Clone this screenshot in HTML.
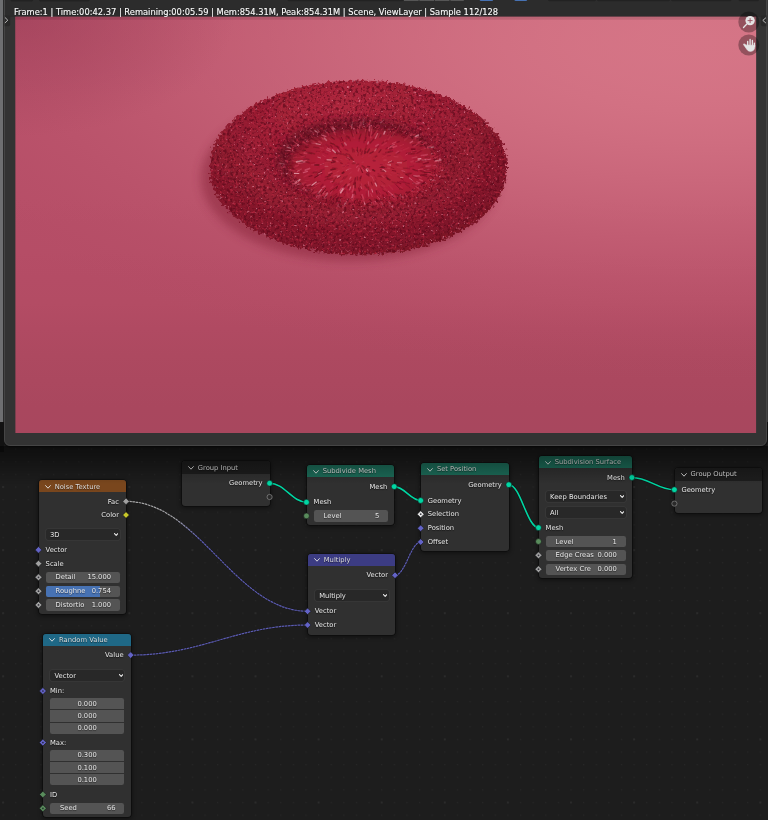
<!DOCTYPE html><html><head><meta charset="utf-8"><title>Blender</title><style>
*{box-sizing:border-box;margin:0;padding:0}
html,body{width:768px;height:820px;overflow:hidden;background:#1d1d1d}
body{position:relative;font-family:"DejaVu Sans","Liberation Sans",sans-serif;font-size:6.76px;color:#e6e6e6;line-height:1}
.abs{position:absolute}
#root{position:absolute;left:0;top:0;width:768px;height:820px;will-change:transform}
#grid{position:absolute;left:0;top:0;width:768px;height:820px}
#vp{position:absolute;left:4px;top:-8px;width:763px;height:454px;background:linear-gradient(#2c2c2c 0,#2c2c2c 24.5px,#333333 24.5px);border:1px solid #454545;border-radius:6px;box-shadow:0 0 2px 1px rgba(0,0,0,.6)}
#lstrip{position:absolute;left:0;top:0;width:4px;height:421.7px;background:#6e6f71;border-right:1px solid #2b2b2b}
#rstrip{position:absolute;left:767px;top:0;width:1px;height:421.7px;background:#3a3a3a}
#vshadow{position:absolute;left:0;top:446px;width:768px;height:38px;background:linear-gradient(rgba(0,0,0,.5),rgba(0,0,0,.36) 30%,rgba(0,0,0,.2) 60%,rgba(0,0,0,0));pointer-events:none}
#lgap{position:absolute;left:0;top:421.7px;width:4px;height:30px;background:#121212}
#status{position:absolute;left:13.9px;top:7.9px;font-size:8.32px;color:#ffffff;white-space:nowrap;-webkit-text-stroke:0.12px #fff;text-shadow:0 0 1px rgba(0,0,0,.6)}
.node{position:absolute;background:#303030;border-radius:3px;box-shadow:0 0 0 .6px rgba(10,10,10,.9),0 1px 4px 1px rgba(0,0,0,.45)}
.hd{position:absolute;left:0;top:0;right:0;border-radius:3px 3px 0 0;white-space:nowrap}
.hd span{position:absolute;left:15.9px;top:0;color:#dadada;text-shadow:0 .5px 1px rgba(0,0,0,.5)}
.hd svg{position:absolute;left:5.9px}
.lab{position:absolute;white-space:nowrap;color:#e6e6e6;text-shadow:0 .5px 1px rgba(0,0,0,.6)}
.fld{position:absolute;background:#545454;border-radius:2.2px;height:11.2px;overflow:hidden}
.fld i{position:absolute;left:0;top:0;bottom:0;background:#4772b3}
.dd span{top:3px !important}
.fld span,.dd span{position:absolute;top:2.7px;font-style:normal;white-space:nowrap;text-shadow:0 .5px 1px rgba(0,0,0,.5)}
.dd{position:absolute;background:#282828;border-radius:2.2px;height:11px;box-shadow:0 0 0 .6px #3d3d3d}
.dd svg{position:absolute;right:1.3px;top:4.6px}
</style></head><body>
<svg id="grid" width="768" height="820"><defs><pattern id="pmin" x="3.1" y="487" width="12.62" height="12.62" patternUnits="userSpaceOnUse" patternTransform="translate(-0.6 -0.6)"><rect x="0" y="0" width="1.15" height="1.15" fill="#272727"/></pattern><pattern id="pmaj" x="3.1" y="487" width="63.1" height="63.1" patternUnits="userSpaceOnUse" patternTransform="translate(-1 -1)"><circle cx="1" cy="1" r="0.95" fill="#2d2d2d"/></pattern></defs><rect width="768" height="820" fill="url(#pmin)"/><rect width="768" height="820" fill="url(#pmaj)"/><defs><linearGradient id="lg1" gradientUnits="userSpaceOnUse" x1="126" y1="0" x2="308" y2="0"><stop offset="0" stop-color="#a8a8a8"/><stop offset="0.27" stop-color="#a0a0a4"/><stop offset="0.41" stop-color="#5c5cb4"/><stop offset="1" stop-color="#5c5cb4"/></linearGradient></defs><path d="M269.6 483.2 C284.5 483.2 291.9 502.2 306.8 502.2" fill="none" stroke="#111" stroke-width="2.8" opacity=".7"/><path d="M269.6 483.2 C284.5 483.2 291.9 502.2 306.8 502.2" fill="none" stroke="#00d6a3" stroke-width="1.6"/><path d="M394.2 486.6 C404.9 486.6 410.3 500.5 421.0 500.5" fill="none" stroke="#111" stroke-width="2.8" opacity=".7"/><path d="M394.2 486.6 C404.9 486.6 410.3 500.5 421.0 500.5" fill="none" stroke="#00d6a3" stroke-width="1.6"/><path d="M508.8 484.7 C520.8 484.7 526.8 527.7 538.8 527.7" fill="none" stroke="#111" stroke-width="2.8" opacity=".7"/><path d="M508.8 484.7 C520.8 484.7 526.8 527.7 538.8 527.7" fill="none" stroke="#00d6a3" stroke-width="1.6"/><path d="M631.9 477.5 C649.0 477.5 657.6 489.7 674.7 489.7" fill="none" stroke="#111" stroke-width="2.8" opacity=".7"/><path d="M631.9 477.5 C649.0 477.5 657.6 489.7 674.7 489.7" fill="none" stroke="#00d6a3" stroke-width="1.6"/><path d="M126.0 501.4 C198.8 501.4 235.1 611.3 307.9 611.3" fill="none" stroke="#111" stroke-width="2.1" opacity=".45"/><path d="M126.0 501.4 C198.8 501.4 235.1 611.3 307.9 611.3" fill="none" stroke="url(#lg1)" stroke-width="1.2" stroke-dasharray="2.6 0.55"/><path d="M130.6 655.1 C201.5 655.1 237.0 625.0 307.9 625.0" fill="none" stroke="#111" stroke-width="2.1" opacity=".45"/><path d="M130.6 655.1 C201.5 655.1 237.0 625.0 307.9 625.0" fill="none" stroke="#5c5cb4" stroke-width="1.2" stroke-dasharray="2.6 0.55"/><path d="M395.0 575.3 C405.4 575.3 410.6 542.0 421.0 542.0" fill="none" stroke="#111" stroke-width="2.1" opacity=".45"/><path d="M395.0 575.3 C405.4 575.3 410.6 542.0 421.0 542.0" fill="none" stroke="#5c5cb4" stroke-width="1.2" stroke-dasharray="2.6 0.55"/></svg>
<div id="root">
<div id="vp"></div>
<div id="lgap"></div><div id="lstrip"></div><div id="rstrip"></div>
<svg class="abs" style="left:15px;top:16px" width="742" height="418" viewBox="15 16 742 418">
<defs>
<linearGradient id="bgv" gradientUnits="userSpaceOnUse" x1="0" y1="17" x2="0" y2="433">
<stop offset="0.000" stop-color="#b44c66"/><stop offset="0.062" stop-color="#b54d66"/><stop offset="0.125" stop-color="#b54d67"/><stop offset="0.188" stop-color="#b64e67"/><stop offset="0.250" stop-color="#b64e67"/><stop offset="0.312" stop-color="#b64e67"/><stop offset="0.375" stop-color="#b64e67"/><stop offset="0.438" stop-color="#b64e67"/><stop offset="0.500" stop-color="#b54d66"/><stop offset="0.562" stop-color="#b54d66"/><stop offset="0.625" stop-color="#b44c65"/><stop offset="0.688" stop-color="#b34c64"/><stop offset="0.750" stop-color="#b04a62"/><stop offset="0.812" stop-color="#ad4960"/><stop offset="0.875" stop-color="#ab485f"/><stop offset="0.938" stop-color="#a9475e"/><stop offset="1.000" stop-color="#a8475e"/>
</linearGradient>
<radialGradient id="bgl" gradientUnits="userSpaceOnUse" cx="0" cy="0" r="1" gradientTransform="translate(705 40) scale(880 345)">
<stop offset="0.000" stop-color="#de808f" stop-opacity="0.780"/><stop offset="0.071" stop-color="#de808f" stop-opacity="0.770"/><stop offset="0.143" stop-color="#de808f" stop-opacity="0.741"/><stop offset="0.214" stop-color="#de808f" stop-opacity="0.695"/><stop offset="0.286" stop-color="#de808f" stop-opacity="0.633"/><stop offset="0.357" stop-color="#de808f" stop-opacity="0.559"/><stop offset="0.429" stop-color="#de808f" stop-opacity="0.477"/><stop offset="0.500" stop-color="#de808f" stop-opacity="0.390"/><stop offset="0.571" stop-color="#de808f" stop-opacity="0.303"/><stop offset="0.643" stop-color="#de808f" stop-opacity="0.221"/><stop offset="0.714" stop-color="#de808f" stop-opacity="0.147"/><stop offset="0.786" stop-color="#de808f" stop-opacity="0.085"/><stop offset="0.857" stop-color="#de808f" stop-opacity="0.039"/><stop offset="0.929" stop-color="#de808f" stop-opacity="0.010"/><stop offset="1.000" stop-color="#de808f" stop-opacity="0.000"/>
</radialGradient>
<radialGradient id="tl" gradientUnits="userSpaceOnUse" cx="0" cy="0" r="1" gradientTransform="translate(15 17) scale(220 120)">
<stop offset="0" stop-color="#9c3f58" stop-opacity=".62"/><stop offset="1" stop-color="#9c3f58" stop-opacity="0"/>
</radialGradient>
<radialGradient id="rim" gradientUnits="userSpaceOnUse" cx="0" cy="0" r="1" gradientTransform="translate(345 105) scale(215 165)">
<stop offset="0" stop-color="#ab263c"/><stop offset="0.4" stop-color="#991e33"/><stop offset="0.75" stop-color="#86192c"/><stop offset="1" stop-color="#781426"/>
</radialGradient>
<radialGradient id="inner" gradientUnits="userSpaceOnUse" cx="0" cy="0" r="1" gradientTransform="translate(366 168) scale(84 44)">
<stop offset="0" stop-color="#b8223b"/><stop offset="0.6" stop-color="#b01f37"/><stop offset="0.9" stop-color="#9c1b31"/><stop offset="1" stop-color="#8e192d"/>
</radialGradient>
<filter id="blur8" x="-20%" y="-20%" width="140%" height="140%"><feGaussianBlur stdDeviation="5"/></filter>
<filter id="blur3" x="-20%" y="-20%" width="140%" height="140%"><feGaussianBlur stdDeviation="3"/></filter>
<filter id="blur6" x="-20%" y="-20%" width="140%" height="140%"><feGaussianBlur stdDeviation="6"/></filter>
<filter id="soft" x="-5%" y="-5%" width="110%" height="110%"><feGaussianBlur stdDeviation="0.45"/></filter>
<filter id="fuzz" x="-5%" y="-5%" width="110%" height="110%">
<feTurbulence type="fractalNoise" baseFrequency="0.33" numOctaves="2" seed="4" result="n"/>
<feDisplacementMap in="SourceGraphic" in2="n" scale="8" xChannelSelector="R" yChannelSelector="G"/>
</filter>
<filter id="tex" x="0" y="0" width="100%" height="100%" color-interpolation-filters="sRGB">
<feTurbulence type="fractalNoise" baseFrequency="0.36" numOctaves="2" seed="7" result="n"/>
<feColorMatrix in="n" type="matrix" values="0 0 0 0 0.93  0 0 0 0 0.60  0 0 0 0 0.68  6 0 0 0 -4.05" result="hi"/>
<feColorMatrix in="n" type="matrix" values="0 0 0 0 0.34  0 0 0 0 0.03  0 0 0 0 0.10  0 -5 0 0 2.6" result="lo"/>
<feColorMatrix in="n" type="matrix" values="0 0 0 0 0.74  0 0 0 0 0.16  0 0 0 0 0.26  0 0 5 0 -2.8" result="mid"/>
<feMerge result="m"><feMergeNode in="lo"/><feMergeNode in="mid"/><feMergeNode in="hi"/></feMerge>
<feGaussianBlur in="m" stdDeviation="0.4" result="mb"/>
<feComposite in="mb" in2="SourceGraphic" operator="in"/>
</filter>
<mask id="basinm" maskUnits="userSpaceOnUse" x="260" y="100" width="210" height="130"><ellipse cx="362" cy="163.5" rx="81" ry="42" fill="#fff" filter="url(#blur3)"/></mask>
</defs>
<clipPath id="imgc"><rect x="15.4" y="16.8" width="740.7" height="416.2"/></clipPath>
<g clip-path="url(#imgc)">
<rect x="15" y="16" width="742" height="418" fill="url(#bgv)"/>
<rect x="15" y="16" width="742" height="418" fill="url(#bgl)"/>
<rect x="15" y="16" width="742" height="418" fill="url(#tl)"/>
<rect x="15" y="16" width="742" height="3.7" fill="#000" opacity=".1"/>
<ellipse cx="350" cy="178" rx="149" ry="83" fill="#8e2a40" opacity=".6" filter="url(#blur8)"/>
<g filter="url(#fuzz)">
<ellipse cx="358.5" cy="164.7" rx="148.5" ry="84.2" fill="url(#rim)"/><ellipse cx="358.5" cy="170.6" rx="148.5" ry="84" fill="url(#rim)"/><rect x="210" y="164.7" width="297" height="6" fill="url(#rim)"/>
</g>
<ellipse cx="362" cy="158" rx="112" ry="60" fill="none" stroke="#b32a40" stroke-width="14" opacity=".3" filter="url(#blur6)"/>
<ellipse cx="357" cy="159.5" rx="80" ry="41.5" fill="#6a1226" opacity=".9" filter="url(#blur3)"/>
<ellipse cx="366" cy="167" rx="77" ry="38" fill="url(#inner)" filter="url(#blur3)"/>
<g mask="url(#basinm)" stroke-linecap="round" fill="none" filter="url(#soft)">
<path d="M303.5 135.8l-5.2 -4.5" stroke="#bc2c44" stroke-width="1.4" opacity="0.59"/>
<path d="M401.6 129.1l1.9 -2.3" stroke="#c0324c" stroke-width="0.9" opacity="0.56"/>
<path d="M360.4 198.6l-0.0 2.6" stroke="#7c1225" stroke-width="1.2" opacity="0.43"/>
<path d="M396.8 142.3l2.4 -0.8" stroke="#5e0c1a" stroke-width="1.4" opacity="0.41"/>
<path d="M443.0 164.5l3.8 -0.9" stroke="#c0324c" stroke-width="1.6" opacity="0.48"/>
<path d="M423.2 155.7l3.3 0.0" stroke="#bc2c44" stroke-width="1.0" opacity="0.78"/>
<path d="M349.2 168.6l-3.0 1.7" stroke="#eeb0bc" stroke-width="0.9" opacity="0.49"/>
<path d="M354.8 162.4l-1.6 -1.0" stroke="#eeb0bc" stroke-width="1.1" opacity="0.49"/>
<path d="M346.2 144.9l-1.4 -2.0" stroke="#eeb0bc" stroke-width="1.7" opacity="0.36"/>
<path d="M358.9 120.8l-2.4 -6.0" stroke="#b82a42" stroke-width="1.1" opacity="0.73"/>
<path d="M286.6 175.5l-6.8 0.4" stroke="#70101f" stroke-width="1.5" opacity="0.77"/>
<path d="M408.4 154.2l3.9 -1.3" stroke="#7a1224" stroke-width="1.2" opacity="0.62"/>
<path d="M369.6 136.1l0.7 -3.8" stroke="#70101f" stroke-width="1.0" opacity="0.58"/>
<path d="M336.5 177.7l-2.9 2.6" stroke="#70101f" stroke-width="1.1" opacity="0.49"/>
<path d="M370.1 175.8l3.0 1.8" stroke="#d8607a" stroke-width="0.9" opacity="0.37"/>
<path d="M424.5 161.1l3.4 -0.4" stroke="#5e0c1a" stroke-width="1.1" opacity="0.46"/>
<path d="M339.0 149.4l-1.9 -3.2" stroke="#7a1224" stroke-width="1.2" opacity="0.73"/>
<path d="M411.5 193.4l3.5 4.2" stroke="#7a1224" stroke-width="1.2" opacity="0.43"/>
<path d="M343.8 172.2l-1.6 1.0" stroke="#5e0c1a" stroke-width="1.6" opacity="0.79"/>
<path d="M298.8 173.5l-4.3 -0.1" stroke="#eeb0bc" stroke-width="1.2" opacity="0.76"/>
<path d="M421.0 191.7l3.3 1.6" stroke="#d8607a" stroke-width="1.6" opacity="0.43"/>
<path d="M294.5 165.7l-4.5 -0.1" stroke="#70101f" stroke-width="1.5" opacity="0.70"/>
<path d="M334.0 128.0l-1.6 -3.9" stroke="#bc2c44" stroke-width="1.4" opacity="0.73"/>
<path d="M350.7 210.3l-2.6 7.1" stroke="#b82a42" stroke-width="1.4" opacity="0.61"/>
<path d="M425.4 166.5l5.1 -0.8" stroke="#d8607a" stroke-width="1.1" opacity="0.58"/>
<path d="M334.2 139.1l-2.8 -2.0" stroke="#650d1c" stroke-width="1.1" opacity="0.73"/>
<path d="M410.1 135.6l6.7 -0.9" stroke="#8a1529" stroke-width="0.9" opacity="0.79"/>
<path d="M376.2 190.8l0.9 3.1" stroke="#70101f" stroke-width="1.4" opacity="0.68"/>
<path d="M396.5 200.6l3.8 4.3" stroke="#650d1c" stroke-width="1.1" opacity="0.60"/>
<path d="M390.4 145.9l2.7 -0.4" stroke="#5e0c1a" stroke-width="1.2" opacity="0.64"/>
<path d="M373.4 202.2l0.7 2.8" stroke="#d8607a" stroke-width="1.7" opacity="0.42"/>
<path d="M382.3 154.2l3.1 -0.1" stroke="#8a1529" stroke-width="0.8" opacity="0.56"/>
<path d="M307.6 189.1l-3.3 1.4" stroke="#b82a42" stroke-width="0.8" opacity="0.53"/>
<path d="M348.7 193.6l-0.1 5.4" stroke="#b82a42" stroke-width="1.7" opacity="0.60"/>
<path d="M343.5 188.2l-2.9 4.5" stroke="#eeb0bc" stroke-width="1.7" opacity="0.72"/>
<path d="M288.1 184.6l-4.4 0.8" stroke="#c0324c" stroke-width="0.9" opacity="0.52"/>
<path d="M319.3 167.0l-2.1 0.8" stroke="#961830" stroke-width="0.8" opacity="0.40"/>
<path d="M294.4 149.2l-5.2 0.3" stroke="#5e0c1a" stroke-width="1.1" opacity="0.54"/>
<path d="M366.2 189.1l-0.4 3.4" stroke="#c0324c" stroke-width="1.3" opacity="0.47"/>
<path d="M422.0 160.1l3.7 -0.5" stroke="#eeb0bc" stroke-width="1.2" opacity="0.48"/>
<path d="M327.9 166.4l-3.0 -0.1" stroke="#eeb0bc" stroke-width="0.8" opacity="0.41"/>
<path d="M310.3 184.4l-3.2 1.2" stroke="#d8607a" stroke-width="1.5" opacity="0.46"/>
<path d="M355.1 182.4l-1.5 2.3" stroke="#5e0c1a" stroke-width="1.7" opacity="0.58"/>
<path d="M414.2 130.6l2.9 -0.7" stroke="#c0324c" stroke-width="1.1" opacity="0.59"/>
<path d="M333.7 185.9l-2.9 2.4" stroke="#b82a42" stroke-width="1.4" opacity="0.72"/>
<path d="M362.2 165.9l2.2 1.4" stroke="#70101f" stroke-width="1.6" opacity="0.60"/>
<path d="M438.1 167.8l5.3 -0.0" stroke="#bc2c44" stroke-width="1.7" opacity="0.64"/>
<path d="M411.1 130.6l4.9 -3.3" stroke="#bc2c44" stroke-width="1.0" opacity="0.48"/>
<path d="M370.1 153.4l3.0 -1.6" stroke="#650d1c" stroke-width="1.3" opacity="0.64"/>
<path d="M309.6 168.5l-4.3 1.6" stroke="#d8607a" stroke-width="1.7" opacity="0.59"/>
<path d="M299.9 179.6l-4.4 3.2" stroke="#eeb0bc" stroke-width="1.5" opacity="0.71"/>
<path d="M351.6 157.6l-2.3 -2.9" stroke="#650d1c" stroke-width="1.4" opacity="0.37"/>
<path d="M382.0 145.6l4.3 -2.7" stroke="#bc2c44" stroke-width="1.6" opacity="0.80"/>
<path d="M342.7 134.1l-2.1 -2.2" stroke="#7a1224" stroke-width="0.9" opacity="0.63"/>
<path d="M387.5 168.2l1.9 0.1" stroke="#d04860" stroke-width="1.3" opacity="0.40"/>
<path d="M301.9 186.1l-2.2 2.1" stroke="#961830" stroke-width="1.3" opacity="0.57"/>
<path d="M410.0 153.2l4.1 -2.6" stroke="#c0324c" stroke-width="1.3" opacity="0.66"/>
<path d="M337.2 208.2l-1.9 3.5" stroke="#70101f" stroke-width="1.3" opacity="0.46"/>
<path d="M359.2 130.2l-1.0 -3.3" stroke="#b82a42" stroke-width="1.2" opacity="0.53"/>
<path d="M367.4 168.7l2.4 1.0" stroke="#d04860" stroke-width="0.9" opacity="0.41"/>
<path d="M322.5 151.2l-2.9 -2.2" stroke="#b82a42" stroke-width="0.9" opacity="0.59"/>
<path d="M305.1 156.4l-5.2 -2.3" stroke="#650d1c" stroke-width="1.4" opacity="0.45"/>
<path d="M425.2 194.9l5.8 3.7" stroke="#c0324c" stroke-width="1.4" opacity="0.52"/>
<path d="M383.9 142.3l4.2 -1.7" stroke="#7a1224" stroke-width="1.1" opacity="0.41"/>
<path d="M394.3 131.0l3.9 -2.2" stroke="#b82a42" stroke-width="1.3" opacity="0.62"/>
<path d="M289.6 146.0l-3.1 -0.5" stroke="#d04860" stroke-width="1.0" opacity="0.44"/>
<path d="M272.0 166.8l-4.6 -0.4" stroke="#650d1c" stroke-width="1.2" opacity="0.75"/>
<path d="M315.9 143.0l-2.5 -1.1" stroke="#c0324c" stroke-width="1.4" opacity="0.38"/>
<path d="M416.1 131.9l4.6 -2.8" stroke="#70101f" stroke-width="1.0" opacity="0.42"/>
<path d="M348.9 186.2l-0.8 2.0" stroke="#7a1224" stroke-width="1.1" opacity="0.77"/>
<path d="M330.8 128.3l-4.2 -5.2" stroke="#70101f" stroke-width="1.5" opacity="0.50"/>
<path d="M316.8 170.6l-2.1 -0.5" stroke="#bc2c44" stroke-width="0.8" opacity="0.45"/>
<path d="M409.3 178.0l2.9 2.2" stroke="#eeb0bc" stroke-width="1.0" opacity="0.51"/>
<path d="M440.9 183.1l6.6 1.4" stroke="#c0324c" stroke-width="1.4" opacity="0.77"/>
<path d="M323.1 139.5l-1.3 -2.0" stroke="#d04860" stroke-width="1.2" opacity="0.66"/>
<path d="M366.9 171.5l1.8 2.9" stroke="#5e0c1a" stroke-width="1.1" opacity="0.39"/>
<path d="M435.9 183.3l7.0 1.7" stroke="#d04860" stroke-width="1.4" opacity="0.64"/>
<path d="M279.4 164.7l-6.1 2.3" stroke="#d8607a" stroke-width="1.1" opacity="0.37"/>
<path d="M445.2 174.8l5.3 -0.7" stroke="#650d1c" stroke-width="1.0" opacity="0.46"/>
<path d="M430.7 145.5l6.0 -4.0" stroke="#c0324c" stroke-width="1.3" opacity="0.74"/>
<path d="M361.6 170.0l0.9 2.3" stroke="#5e0c1a" stroke-width="1.5" opacity="0.59"/>
<path d="M365.7 167.9l2.1 1.9" stroke="#7c1225" stroke-width="1.3" opacity="0.41"/>
<path d="M280.0 168.4l-4.4 1.1" stroke="#c0324c" stroke-width="0.9" opacity="0.39"/>
<path d="M359.8 177.6l0.4 3.2" stroke="#7c1225" stroke-width="1.0" opacity="0.57"/>
<path d="M359.6 203.4l-1.4 6.3" stroke="#70101f" stroke-width="0.9" opacity="0.70"/>
<path d="M301.5 192.2l-2.6 3.1" stroke="#7a1224" stroke-width="0.9" opacity="0.36"/>
<path d="M405.3 194.6l1.9 2.0" stroke="#d04860" stroke-width="1.4" opacity="0.47"/>
<path d="M380.2 137.1l0.9 -2.4" stroke="#c0324c" stroke-width="0.9" opacity="0.57"/>
<path d="M351.6 171.8l-2.3 2.3" stroke="#d04860" stroke-width="0.8" opacity="0.37"/>
<path d="M395.8 184.5l3.9 4.1" stroke="#5e0c1a" stroke-width="0.8" opacity="0.59"/>
<path d="M387.5 178.9l2.3 0.9" stroke="#5e0c1a" stroke-width="1.5" opacity="0.68"/>
<path d="M413.1 183.3l5.3 0.4" stroke="#d8607a" stroke-width="1.5" opacity="0.55"/>
<path d="M312.0 175.6l-2.9 0.9" stroke="#5e0c1a" stroke-width="1.2" opacity="0.55"/>
<path d="M368.6 118.8l1.7 -7.3" stroke="#5e0c1a" stroke-width="0.8" opacity="0.41"/>
<path d="M403.0 132.6l1.7 -2.0" stroke="#5e0c1a" stroke-width="1.0" opacity="0.67"/>
<path d="M321.6 189.4l-3.7 4.2" stroke="#eeb0bc" stroke-width="1.3" opacity="0.51"/>
<path d="M359.3 140.9l-0.3 -2.8" stroke="#961830" stroke-width="1.6" opacity="0.73"/>
<path d="M317.0 143.9l-5.3 -0.9" stroke="#d8607a" stroke-width="1.1" opacity="0.39"/>
<path d="M296.7 188.6l-5.8 3.6" stroke="#7a1224" stroke-width="1.5" opacity="0.50"/>
<path d="M324.8 124.2l-3.7 -5.4" stroke="#650d1c" stroke-width="1.4" opacity="0.40"/>
<path d="M303.1 141.2l-2.2 -1.6" stroke="#961830" stroke-width="0.8" opacity="0.49"/>
<path d="M313.0 185.8l-3.8 1.1" stroke="#7a1224" stroke-width="1.5" opacity="0.77"/>
<path d="M333.1 128.0l-3.4 -5.0" stroke="#b82a42" stroke-width="1.7" opacity="0.36"/>
<path d="M364.1 142.8l0.1 -2.1" stroke="#7a1224" stroke-width="1.1" opacity="0.61"/>
<path d="M363.6 124.3l-0.3 -6.7" stroke="#eeb0bc" stroke-width="1.6" opacity="0.46"/>
<path d="M385.0 167.3l2.2 1.2" stroke="#b82a42" stroke-width="1.4" opacity="0.73"/>
<path d="M354.0 127.4l-1.7 -4.4" stroke="#70101f" stroke-width="1.0" opacity="0.79"/>
<path d="M304.7 156.0l-3.6 0.9" stroke="#c0324c" stroke-width="1.5" opacity="0.59"/>
<path d="M378.7 201.3l2.4 3.3" stroke="#bc2c44" stroke-width="1.6" opacity="0.66"/>
<path d="M403.7 161.6l2.8 -1.1" stroke="#7a1224" stroke-width="1.0" opacity="0.63"/>
<path d="M388.4 152.4l4.1 -1.1" stroke="#7c1225" stroke-width="1.4" opacity="0.61"/>
<path d="M308.6 137.2l-3.7 -2.2" stroke="#7c1225" stroke-width="1.2" opacity="0.59"/>
<path d="M399.9 149.4l3.7 -2.1" stroke="#b82a42" stroke-width="1.0" opacity="0.36"/>
<path d="M409.5 187.4l2.8 1.6" stroke="#7c1225" stroke-width="1.1" opacity="0.40"/>
<path d="M370.8 137.7l0.4 -5.5" stroke="#c0324c" stroke-width="1.6" opacity="0.78"/>
<path d="M324.4 203.4l-5.2 4.8" stroke="#7c1225" stroke-width="1.6" opacity="0.63"/>
<path d="M383.4 122.9l0.8 -5.9" stroke="#70101f" stroke-width="0.9" opacity="0.42"/>
<path d="M337.2 153.9l-3.0 -2.3" stroke="#7a1224" stroke-width="1.5" opacity="0.67"/>
<path d="M437.2 142.9l7.4 -1.3" stroke="#70101f" stroke-width="1.1" opacity="0.72"/>
<path d="M376.2 189.2l4.0 3.5" stroke="#bc2c44" stroke-width="1.5" opacity="0.46"/>
<path d="M416.3 152.5l5.1 -3.5" stroke="#b82a42" stroke-width="0.9" opacity="0.35"/>
<path d="M320.4 182.7l-3.8 1.0" stroke="#bc2c44" stroke-width="1.4" opacity="0.36"/>
<path d="M391.9 120.3l2.9 -2.6" stroke="#b82a42" stroke-width="1.1" opacity="0.48"/>
<path d="M283.9 164.3l-5.0 -1.2" stroke="#eeb0bc" stroke-width="1.2" opacity="0.77"/>
<path d="M413.6 176.0l6.1 -0.0" stroke="#eeb0bc" stroke-width="1.4" opacity="0.38"/>
<path d="M355.3 178.4l-1.0 4.3" stroke="#8a1529" stroke-width="1.6" opacity="0.73"/>
<path d="M360.9 195.6l0.9 2.5" stroke="#7a1224" stroke-width="0.9" opacity="0.71"/>
<path d="M425.9 168.7l5.5 2.6" stroke="#70101f" stroke-width="0.8" opacity="0.45"/>
<path d="M418.1 159.0l2.7 -0.3" stroke="#eeb0bc" stroke-width="1.3" opacity="0.73"/>
<path d="M345.7 165.3l-2.9 1.1" stroke="#8a1529" stroke-width="1.2" opacity="0.62"/>
<path d="M418.1 142.3l2.7 -0.7" stroke="#d04860" stroke-width="1.2" opacity="0.68"/>
<path d="M390.2 124.6l3.9 -5.7" stroke="#d04860" stroke-width="1.7" opacity="0.69"/>
<path d="M385.9 152.6l3.0 -0.6" stroke="#70101f" stroke-width="1.7" opacity="0.45"/>
<path d="M317.8 175.6l-2.9 0.9" stroke="#961830" stroke-width="1.4" opacity="0.70"/>
<path d="M360.3 151.0l0.4 -1.7" stroke="#650d1c" stroke-width="1.6" opacity="0.44"/>
<path d="M440.4 169.0l5.0 2.3" stroke="#c0324c" stroke-width="1.2" opacity="0.38"/>
<path d="M312.2 191.8l-3.6 4.8" stroke="#70101f" stroke-width="1.0" opacity="0.69"/>
<path d="M303.7 193.6l-3.6 3.6" stroke="#bc2c44" stroke-width="1.3" opacity="0.48"/>
<path d="M403.8 182.3l5.5 1.3" stroke="#8a1529" stroke-width="1.3" opacity="0.78"/>
<path d="M362.9 199.4l1.4 4.5" stroke="#bc2c44" stroke-width="1.1" opacity="0.46"/>
<path d="M348.2 154.4l-2.0 -0.7" stroke="#7c1225" stroke-width="1.3" opacity="0.62"/>
<path d="M364.7 153.3l0.8 -1.5" stroke="#650d1c" stroke-width="1.6" opacity="0.70"/>
<path d="M303.2 152.9l-2.8 0.3" stroke="#b82a42" stroke-width="1.3" opacity="0.47"/>
<path d="M298.9 145.9l-4.0 -0.9" stroke="#c0324c" stroke-width="1.3" opacity="0.66"/>
<path d="M346.0 155.3l-2.9 -1.1" stroke="#70101f" stroke-width="1.6" opacity="0.48"/>
<path d="M281.3 150.3l-4.4 0.5" stroke="#d8607a" stroke-width="0.8" opacity="0.60"/>
<path d="M342.1 160.1l-1.6 -0.7" stroke="#c0324c" stroke-width="1.1" opacity="0.50"/>
<path d="M383.9 134.0l1.1 -2.7" stroke="#eeb0bc" stroke-width="1.5" opacity="0.63"/>
<path d="M304.4 188.0l-3.0 2.2" stroke="#d8607a" stroke-width="1.6" opacity="0.73"/>
<path d="M302.7 144.3l-3.1 -2.4" stroke="#70101f" stroke-width="0.8" opacity="0.37"/>
<path d="M387.4 134.5l2.3 -1.3" stroke="#5e0c1a" stroke-width="1.2" opacity="0.54"/>
<path d="M300.3 157.9l-4.3 -0.7" stroke="#bc2c44" stroke-width="0.9" opacity="0.38"/>
<path d="M348.0 150.9l-2.5 -1.5" stroke="#961830" stroke-width="1.3" opacity="0.59"/>
<path d="M405.7 125.0l3.6 -2.3" stroke="#650d1c" stroke-width="1.5" opacity="0.47"/>
<path d="M358.0 165.7l-1.5 1.6" stroke="#d8607a" stroke-width="1.2" opacity="0.42"/>
<path d="M368.7 187.6l0.1 2.8" stroke="#70101f" stroke-width="0.9" opacity="0.80"/>
<path d="M321.0 140.1l-3.2 -2.1" stroke="#7c1225" stroke-width="0.9" opacity="0.57"/>
<path d="M335.9 135.0l-3.3 -4.8" stroke="#c0324c" stroke-width="1.2" opacity="0.60"/>
<path d="M271.2 163.2l-4.0 0.9" stroke="#c0324c" stroke-width="1.2" opacity="0.70"/>
<path d="M384.1 142.2l1.5 -2.6" stroke="#b82a42" stroke-width="1.6" opacity="0.58"/>
<path d="M283.5 167.3l-5.8 2.3" stroke="#bc2c44" stroke-width="1.5" opacity="0.50"/>
<path d="M416.1 186.5l4.0 3.1" stroke="#d04860" stroke-width="1.5" opacity="0.59"/>
<path d="M383.4 188.0l1.4 2.2" stroke="#b82a42" stroke-width="1.6" opacity="0.49"/>
<path d="M345.2 190.3l-2.8 2.3" stroke="#70101f" stroke-width="1.1" opacity="0.43"/>
<path d="M434.0 149.5l5.0 0.6" stroke="#70101f" stroke-width="1.2" opacity="0.38"/>
<path d="M282.1 185.5l-5.8 1.5" stroke="#961830" stroke-width="1.3" opacity="0.77"/>
<path d="M416.9 153.3l4.7 -2.6" stroke="#70101f" stroke-width="1.4" opacity="0.39"/>
<path d="M317.7 132.4l-2.7 -1.7" stroke="#eeb0bc" stroke-width="1.3" opacity="0.79"/>
<path d="M322.0 173.4l-4.8 1.2" stroke="#650d1c" stroke-width="1.4" opacity="0.43"/>
<path d="M389.2 205.2l1.4 2.9" stroke="#eeb0bc" stroke-width="0.8" opacity="0.77"/>
<path d="M300.4 170.6l-4.4 -1.0" stroke="#8a1529" stroke-width="1.0" opacity="0.42"/>
<path d="M317.0 141.0l-4.6 -2.1" stroke="#70101f" stroke-width="0.9" opacity="0.44"/>
<path d="M333.0 126.2l-5.6 -4.3" stroke="#c0324c" stroke-width="1.0" opacity="0.64"/>
<path d="M350.3 140.6l-1.6 -4.0" stroke="#7a1224" stroke-width="1.4" opacity="0.40"/>
<path d="M319.5 152.6l-2.2 -0.4" stroke="#bc2c44" stroke-width="1.3" opacity="0.44"/>
<path d="M426.6 169.3l6.0 0.4" stroke="#8a1529" stroke-width="1.6" opacity="0.48"/>
<path d="M316.6 202.1l-2.5 4.1" stroke="#650d1c" stroke-width="1.1" opacity="0.70"/>
<path d="M349.2 184.1l-1.5 1.4" stroke="#d8607a" stroke-width="1.6" opacity="0.49"/>
<path d="M403.2 133.5l4.8 -3.9" stroke="#961830" stroke-width="1.2" opacity="0.76"/>
<path d="M308.1 159.9l-4.8 -1.1" stroke="#d04860" stroke-width="0.9" opacity="0.57"/>
<path d="M439.0 164.3l6.4 1.4" stroke="#d04860" stroke-width="1.0" opacity="0.35"/>
<path d="M435.0 156.8l3.3 -1.2" stroke="#8a1529" stroke-width="1.0" opacity="0.72"/>
<path d="M326.5 140.3l-2.3 -2.1" stroke="#eeb0bc" stroke-width="1.6" opacity="0.44"/>
<path d="M361.1 176.1l-0.5 2.5" stroke="#5e0c1a" stroke-width="1.1" opacity="0.68"/>
<path d="M310.5 190.0l-4.2 1.3" stroke="#961830" stroke-width="1.5" opacity="0.75"/>
<path d="M354.5 163.5l-2.1 -0.1" stroke="#7c1225" stroke-width="1.5" opacity="0.40"/>
<path d="M301.5 172.1l-4.2 -0.4" stroke="#8a1529" stroke-width="0.9" opacity="0.70"/>
<path d="M336.8 129.1l-2.9 -4.3" stroke="#5e0c1a" stroke-width="1.4" opacity="0.73"/>
<path d="M349.5 159.5l-2.6 -2.5" stroke="#7c1225" stroke-width="1.7" opacity="0.66"/>
<path d="M378.9 196.7l0.7 3.1" stroke="#650d1c" stroke-width="0.8" opacity="0.54"/>
<path d="M335.3 202.2l-1.5 3.1" stroke="#70101f" stroke-width="1.6" opacity="0.66"/>
<path d="M370.7 193.2l1.5 3.5" stroke="#d04860" stroke-width="1.0" opacity="0.59"/>
<path d="M381.5 201.2l1.0 3.7" stroke="#70101f" stroke-width="1.6" opacity="0.76"/>
<path d="M374.5 134.8l2.7 -3.9" stroke="#bc2c44" stroke-width="1.5" opacity="0.68"/>
<path d="M379.1 198.3l2.1 5.7" stroke="#d04860" stroke-width="1.0" opacity="0.59"/>
<path d="M388.2 140.0l2.3 -3.8" stroke="#b82a42" stroke-width="1.5" opacity="0.63"/>
<path d="M386.5 195.6l3.3 5.4" stroke="#bc2c44" stroke-width="0.8" opacity="0.60"/>
<path d="M438.3 152.7l6.8 -2.0" stroke="#70101f" stroke-width="1.2" opacity="0.52"/>
<path d="M435.3 161.0l6.5 -0.9" stroke="#eeb0bc" stroke-width="1.5" opacity="0.55"/>
<path d="M420.2 146.1l3.2 -0.8" stroke="#650d1c" stroke-width="1.3" opacity="0.79"/>
<path d="M421.0 167.4l4.3 -1.1" stroke="#7a1224" stroke-width="1.3" opacity="0.45"/>
<path d="M323.7 132.8l-5.1 -2.2" stroke="#650d1c" stroke-width="1.0" opacity="0.51"/>
<path d="M361.2 154.5l1.1 -3.2" stroke="#8a1529" stroke-width="1.6" opacity="0.69"/>
<path d="M410.2 135.9l3.2 -3.5" stroke="#d8607a" stroke-width="1.0" opacity="0.49"/>
<path d="M296.2 180.9l-6.5 1.4" stroke="#8a1529" stroke-width="1.0" opacity="0.48"/>
<path d="M400.7 178.0l2.5 2.0" stroke="#70101f" stroke-width="0.9" opacity="0.63"/>
<path d="M279.6 185.5l-4.7 -0.1" stroke="#70101f" stroke-width="1.2" opacity="0.39"/>
<path d="M392.4 143.5l3.5 -1.5" stroke="#d04860" stroke-width="1.3" opacity="0.75"/>
<path d="M336.7 193.7l-3.6 2.6" stroke="#8a1529" stroke-width="1.3" opacity="0.73"/>
<path d="M304.2 150.6l-4.4 -1.7" stroke="#650d1c" stroke-width="1.6" opacity="0.41"/>
<path d="M406.1 174.3l4.9 -0.7" stroke="#650d1c" stroke-width="1.3" opacity="0.62"/>
<path d="M386.2 192.0l1.4 2.1" stroke="#70101f" stroke-width="1.3" opacity="0.66"/>
<path d="M441.6 177.3l4.3 -0.0" stroke="#650d1c" stroke-width="1.4" opacity="0.37"/>
<path d="M324.2 169.1l-3.8 1.1" stroke="#8a1529" stroke-width="1.3" opacity="0.53"/>
<path d="M299.2 170.7l-3.4 1.8" stroke="#b82a42" stroke-width="1.6" opacity="0.39"/>
<path d="M315.5 173.4l-3.2 -0.4" stroke="#961830" stroke-width="1.6" opacity="0.53"/>
<path d="M414.9 127.3l4.2 -5.1" stroke="#bc2c44" stroke-width="1.3" opacity="0.51"/>
<path d="M396.4 206.3l5.6 2.8" stroke="#b82a42" stroke-width="1.0" opacity="0.63"/>
<path d="M293.9 178.1l-3.7 0.9" stroke="#d04860" stroke-width="1.0" opacity="0.44"/>
<path d="M296.9 185.8l-5.5 0.2" stroke="#d04860" stroke-width="1.6" opacity="0.70"/>
<path d="M340.8 189.7l-1.8 2.1" stroke="#d04860" stroke-width="0.8" opacity="0.57"/>
<path d="M349.5 197.7l0.3 3.4" stroke="#b82a42" stroke-width="1.5" opacity="0.45"/>
<path d="M343.4 166.3l-1.7 0.8" stroke="#bc2c44" stroke-width="1.1" opacity="0.46"/>
<path d="M386.4 170.2l3.1 2.2" stroke="#b82a42" stroke-width="1.5" opacity="0.46"/>
<path d="M381.8 185.3l2.5 1.1" stroke="#bc2c44" stroke-width="1.7" opacity="0.73"/>
<path d="M365.6 132.0l-0.0 -2.6" stroke="#bc2c44" stroke-width="1.5" opacity="0.76"/>
<path d="M306.8 153.8l-3.2 -0.8" stroke="#d04860" stroke-width="1.4" opacity="0.35"/>
<path d="M405.6 196.3l2.4 3.4" stroke="#7c1225" stroke-width="1.7" opacity="0.57"/>
<path d="M399.3 129.4l3.3 -2.5" stroke="#650d1c" stroke-width="1.1" opacity="0.47"/>
<path d="M376.7 206.1l1.6 4.6" stroke="#961830" stroke-width="0.8" opacity="0.61"/>
<path d="M359.9 167.5l0.7 1.6" stroke="#7c1225" stroke-width="1.1" opacity="0.64"/>
<path d="M375.6 206.2l3.9 5.0" stroke="#c0324c" stroke-width="0.9" opacity="0.62"/>
<path d="M337.5 125.4l-3.2 -5.7" stroke="#961830" stroke-width="1.1" opacity="0.46"/>
<path d="M302.3 143.4l-4.3 -2.9" stroke="#961830" stroke-width="1.5" opacity="0.51"/>
<path d="M294.8 169.3l-3.6 -0.7" stroke="#8a1529" stroke-width="0.9" opacity="0.42"/>
<path d="M371.6 135.8l3.4 -4.2" stroke="#5e0c1a" stroke-width="1.4" opacity="0.41"/>
<path d="M295.5 175.7l-2.7 1.2" stroke="#d04860" stroke-width="1.6" opacity="0.43"/>
<path d="M320.6 158.0l-2.7 -0.9" stroke="#eeb0bc" stroke-width="0.9" opacity="0.51"/>
<path d="M334.9 129.0l-3.0 -2.0" stroke="#eeb0bc" stroke-width="1.5" opacity="0.52"/>
<path d="M367.3 152.6l2.1 -3.5" stroke="#650d1c" stroke-width="1.4" opacity="0.67"/>
<path d="M293.7 168.9l-6.3 -0.9" stroke="#5e0c1a" stroke-width="1.3" opacity="0.44"/>
<path d="M365.2 140.3l0.7 -2.6" stroke="#650d1c" stroke-width="1.4" opacity="0.63"/>
<path d="M317.3 124.4l-3.7 -5.0" stroke="#bc2c44" stroke-width="1.6" opacity="0.60"/>
<path d="M375.1 126.8l1.6 -6.6" stroke="#650d1c" stroke-width="1.2" opacity="0.59"/>
<path d="M345.3 123.5l-2.4 -6.5" stroke="#d8607a" stroke-width="1.4" opacity="0.46"/>
<path d="M365.5 203.5l1.3 3.1" stroke="#70101f" stroke-width="1.5" opacity="0.64"/>
<path d="M281.5 153.7l-3.1 -1.4" stroke="#d8607a" stroke-width="1.4" opacity="0.66"/>
<path d="M378.1 176.1l3.8 0.8" stroke="#650d1c" stroke-width="1.2" opacity="0.43"/>
<path d="M368.4 168.6l1.8 1.5" stroke="#961830" stroke-width="1.3" opacity="0.69"/>
<path d="M336.2 182.8l-2.1 3.0" stroke="#961830" stroke-width="1.6" opacity="0.50"/>
<path d="M367.6 128.3l-1.1 -6.5" stroke="#7c1225" stroke-width="1.0" opacity="0.77"/>
<path d="M350.6 189.3l-1.6 2.5" stroke="#961830" stroke-width="0.9" opacity="0.57"/>
<path d="M397.2 153.1l2.6 -0.9" stroke="#650d1c" stroke-width="0.8" opacity="0.40"/>
<path d="M389.0 185.2l3.7 4.1" stroke="#b82a42" stroke-width="1.5" opacity="0.80"/>
<path d="M412.3 185.4l4.6 0.9" stroke="#961830" stroke-width="1.0" opacity="0.41"/>
<path d="M365.4 149.1l1.3 -3.6" stroke="#8a1529" stroke-width="1.6" opacity="0.45"/>
<path d="M341.3 181.9l-2.6 3.0" stroke="#650d1c" stroke-width="0.8" opacity="0.47"/>
<path d="M435.0 161.2l6.2 0.9" stroke="#d04860" stroke-width="1.1" opacity="0.60"/>
<path d="M408.2 194.5l3.4 2.6" stroke="#8a1529" stroke-width="1.6" opacity="0.48"/>
<path d="M277.5 181.8l-4.3 3.0" stroke="#bc2c44" stroke-width="1.7" opacity="0.56"/>
<path d="M330.9 202.8l-1.9 4.3" stroke="#70101f" stroke-width="1.3" opacity="0.64"/>
<path d="M302.9 162.6l-4.6 1.0" stroke="#d8607a" stroke-width="1.3" opacity="0.52"/>
<path d="M368.3 170.4l2.3 0.7" stroke="#d04860" stroke-width="1.7" opacity="0.56"/>
<path d="M279.9 147.4l-3.5 -2.1" stroke="#7c1225" stroke-width="1.6" opacity="0.57"/>
<path d="M382.9 169.7l2.7 1.7" stroke="#eeb0bc" stroke-width="1.7" opacity="0.54"/>
<path d="M329.9 135.7l-2.8 -1.3" stroke="#7c1225" stroke-width="1.2" opacity="0.73"/>
<path d="M324.7 152.1l-2.2 -0.3" stroke="#8a1529" stroke-width="1.2" opacity="0.45"/>
<path d="M442.4 148.4l5.7 -0.4" stroke="#c0324c" stroke-width="1.2" opacity="0.42"/>
<path d="M339.1 176.1l-1.6 1.1" stroke="#d8607a" stroke-width="1.1" opacity="0.77"/>
<path d="M404.3 125.2l2.8 -1.7" stroke="#eeb0bc" stroke-width="1.4" opacity="0.52"/>
<path d="M336.4 195.7l-2.8 2.7" stroke="#7a1224" stroke-width="1.0" opacity="0.45"/>
<path d="M304.3 161.1l-3.7 0.5" stroke="#7c1225" stroke-width="1.3" opacity="0.69"/>
<path d="M373.4 160.6l1.7 0.1" stroke="#7c1225" stroke-width="1.6" opacity="0.54"/>
<path d="M275.3 156.9l-3.3 -0.8" stroke="#7c1225" stroke-width="1.1" opacity="0.53"/>
<path d="M308.0 152.7l-3.1 -0.2" stroke="#c0324c" stroke-width="1.2" opacity="0.48"/>
<path d="M371.3 131.7l0.6 -5.9" stroke="#d04860" stroke-width="1.5" opacity="0.50"/>
<path d="M413.2 181.2l2.2 1.8" stroke="#c0324c" stroke-width="1.3" opacity="0.58"/>
<path d="M285.0 167.0l-6.7 0.4" stroke="#d8607a" stroke-width="1.7" opacity="0.47"/>
<path d="M306.1 128.9l-6.5 -1.4" stroke="#5e0c1a" stroke-width="1.0" opacity="0.54"/>
<path d="M366.2 169.7l1.4 1.6" stroke="#eeb0bc" stroke-width="1.5" opacity="0.73"/>
<path d="M403.5 137.6l5.2 -1.0" stroke="#70101f" stroke-width="1.4" opacity="0.45"/>
<path d="M397.5 162.6l3.9 0.1" stroke="#eeb0bc" stroke-width="1.4" opacity="0.44"/>
<path d="M330.5 175.5l-3.2 1.0" stroke="#5e0c1a" stroke-width="1.2" opacity="0.55"/>
<path d="M348.9 138.2l-2.1 -2.3" stroke="#650d1c" stroke-width="1.2" opacity="0.60"/>
<path d="M333.3 144.0l-2.3 -0.8" stroke="#5e0c1a" stroke-width="0.9" opacity="0.53"/>
<path d="M341.2 151.8l-1.9 -1.0" stroke="#650d1c" stroke-width="0.8" opacity="0.62"/>
<path d="M327.3 198.3l-3.2 5.3" stroke="#8a1529" stroke-width="1.5" opacity="0.63"/>
<path d="M388.6 207.0l2.2 4.8" stroke="#bc2c44" stroke-width="0.9" opacity="0.48"/>
<path d="M310.1 138.3l-2.7 -0.8" stroke="#70101f" stroke-width="0.9" opacity="0.69"/>
<path d="M374.8 201.5l0.9 3.7" stroke="#d04860" stroke-width="0.9" opacity="0.58"/>
<path d="M376.6 199.4l1.6 4.7" stroke="#650d1c" stroke-width="1.3" opacity="0.57"/>
<path d="M385.0 175.1l2.7 1.1" stroke="#961830" stroke-width="1.3" opacity="0.57"/>
<path d="M317.4 133.7l-3.2 -2.0" stroke="#961830" stroke-width="0.8" opacity="0.69"/>
<path d="M281.8 187.7l-5.0 1.2" stroke="#d8607a" stroke-width="1.2" opacity="0.72"/>
<path d="M334.3 188.7l-3.9 2.6" stroke="#650d1c" stroke-width="0.9" opacity="0.68"/>
<path d="M431.5 149.9l2.8 -0.1" stroke="#961830" stroke-width="1.5" opacity="0.59"/>
<path d="M406.3 153.3l4.4 -0.4" stroke="#70101f" stroke-width="1.1" opacity="0.53"/>
<path d="M411.7 191.4l6.2 0.9" stroke="#c0324c" stroke-width="0.9" opacity="0.75"/>
<path d="M411.3 149.1l3.8 -0.0" stroke="#5e0c1a" stroke-width="1.1" opacity="0.79"/>
<path d="M389.5 205.8l1.9 5.8" stroke="#eeb0bc" stroke-width="0.8" opacity="0.54"/>
<path d="M378.9 136.7l2.8 -2.1" stroke="#c0324c" stroke-width="1.3" opacity="0.42"/>
<path d="M380.0 199.7l2.0 1.7" stroke="#b82a42" stroke-width="1.5" opacity="0.57"/>
<path d="M298.5 165.4l-5.3 2.0" stroke="#c0324c" stroke-width="1.3" opacity="0.59"/>
<path d="M375.6 129.4l2.5 -4.1" stroke="#70101f" stroke-width="1.5" opacity="0.56"/>
<path d="M425.3 138.0l3.7 -1.3" stroke="#d8607a" stroke-width="1.6" opacity="0.67"/>
<path d="M337.4 175.1l-3.6 1.0" stroke="#d8607a" stroke-width="1.1" opacity="0.45"/>
<path d="M425.4 157.1l3.5 -0.1" stroke="#7c1225" stroke-width="1.7" opacity="0.43"/>
<path d="M384.2 201.9l3.0 3.8" stroke="#961830" stroke-width="1.6" opacity="0.77"/>
<path d="M348.1 164.7l-2.7 1.3" stroke="#c0324c" stroke-width="0.9" opacity="0.76"/>
<path d="M355.1 191.4l0.6 3.3" stroke="#7c1225" stroke-width="1.1" opacity="0.73"/>
<path d="M433.2 158.2l4.3 -1.5" stroke="#c0324c" stroke-width="1.2" opacity="0.71"/>
<path d="M442.5 179.6l4.8 2.9" stroke="#eeb0bc" stroke-width="1.5" opacity="0.79"/>
<path d="M433.2 138.8l2.9 -2.1" stroke="#bc2c44" stroke-width="1.5" opacity="0.47"/>
<path d="M413.1 128.1l3.9 -1.0" stroke="#d8607a" stroke-width="1.5" opacity="0.46"/>
<path d="M375.3 180.9l1.8 3.4" stroke="#961830" stroke-width="1.6" opacity="0.67"/>
<path d="M344.7 167.6l-2.2 1.0" stroke="#b82a42" stroke-width="0.9" opacity="0.75"/>
<path d="M340.9 124.9l-1.5 -3.9" stroke="#8a1529" stroke-width="1.4" opacity="0.62"/>
<path d="M439.0 163.8l5.0 -0.2" stroke="#7a1224" stroke-width="1.3" opacity="0.62"/>
<path d="M333.1 199.8l-3.8 5.5" stroke="#650d1c" stroke-width="1.7" opacity="0.78"/>
<path d="M382.4 167.4l3.8 0.1" stroke="#8a1529" stroke-width="1.7" opacity="0.44"/>
<path d="M436.3 155.0l6.8 -2.2" stroke="#70101f" stroke-width="1.0" opacity="0.43"/>
<path d="M335.3 152.4l-2.7 -2.4" stroke="#eeb0bc" stroke-width="1.5" opacity="0.68"/>
<path d="M352.6 194.4l-0.4 3.8" stroke="#d8607a" stroke-width="1.2" opacity="0.71"/>
<path d="M341.4 154.1l-3.1 -0.9" stroke="#7a1224" stroke-width="1.6" opacity="0.58"/>
<path d="M355.4 182.9l-0.3 4.4" stroke="#650d1c" stroke-width="1.3" opacity="0.48"/>
<path d="M323.3 191.8l-2.4 3.2" stroke="#70101f" stroke-width="1.4" opacity="0.63"/>
<path d="M297.7 134.3l-2.9 -1.7" stroke="#8a1529" stroke-width="1.1" opacity="0.36"/>
<path d="M322.4 136.4l-4.3 -1.2" stroke="#70101f" stroke-width="1.4" opacity="0.50"/>
<path d="M364.1 201.2l0.4 3.8" stroke="#d8607a" stroke-width="0.9" opacity="0.70"/>
<path d="M318.1 194.2l-3.0 1.1" stroke="#961830" stroke-width="1.0" opacity="0.63"/>
<path d="M394.5 204.8l1.9 3.2" stroke="#650d1c" stroke-width="1.2" opacity="0.55"/>
<path d="M361.6 183.7l-0.5 2.0" stroke="#c0324c" stroke-width="1.0" opacity="0.70"/>
<path d="M356.3 163.1l-2.9 -0.5" stroke="#bc2c44" stroke-width="1.7" opacity="0.63"/>
<path d="M429.0 159.0l2.6 0.4" stroke="#961830" stroke-width="1.2" opacity="0.67"/>
<path d="M374.3 175.4l2.1 3.6" stroke="#961830" stroke-width="0.9" opacity="0.59"/>
<path d="M370.2 142.9l3.4 -3.6" stroke="#7c1225" stroke-width="1.4" opacity="0.77"/>
<path d="M334.4 164.0l-4.0 1.2" stroke="#bc2c44" stroke-width="0.9" opacity="0.71"/>
<path d="M380.8 171.1l3.9 0.5" stroke="#7c1225" stroke-width="1.0" opacity="0.69"/>
<path d="M374.1 124.7l1.5 -4.6" stroke="#650d1c" stroke-width="1.6" opacity="0.49"/>
<path d="M359.2 168.2l-1.0 2.7" stroke="#d04860" stroke-width="1.4" opacity="0.72"/>
<path d="M311.4 200.7l-3.1 1.0" stroke="#961830" stroke-width="1.3" opacity="0.45"/>
<path d="M416.8 181.7l5.4 2.2" stroke="#d8607a" stroke-width="1.0" opacity="0.71"/>
<path d="M329.1 176.6l-3.7 0.6" stroke="#7c1225" stroke-width="1.6" opacity="0.44"/>
<path d="M334.8 161.6l-3.0 -1.5" stroke="#650d1c" stroke-width="1.3" opacity="0.48"/>
<path d="M272.6 154.2l-4.1 -1.1" stroke="#961830" stroke-width="1.7" opacity="0.61"/>
<path d="M366.4 173.9l2.6 1.9" stroke="#5e0c1a" stroke-width="1.5" opacity="0.48"/>
<path d="M383.4 187.8l4.7 2.4" stroke="#b82a42" stroke-width="1.2" opacity="0.46"/>
<path d="M420.2 134.7l3.4 -2.6" stroke="#d8607a" stroke-width="1.7" opacity="0.59"/>
<path d="M317.7 132.0l-3.5 -4.5" stroke="#8a1529" stroke-width="1.1" opacity="0.76"/>
<path d="M430.5 154.8l5.6 -1.8" stroke="#b82a42" stroke-width="0.9" opacity="0.71"/>
<path d="M380.1 205.5l3.7 3.3" stroke="#b82a42" stroke-width="1.6" opacity="0.58"/>
<path d="M294.0 191.8l-5.6 4.5" stroke="#d8607a" stroke-width="0.9" opacity="0.36"/>
<path d="M336.4 157.6l-3.2 0.3" stroke="#650d1c" stroke-width="1.2" opacity="0.64"/>
<path d="M305.1 161.7l-2.4 0.1" stroke="#eeb0bc" stroke-width="1.5" opacity="0.39"/>
<path d="M382.2 203.8l3.0 5.3" stroke="#7a1224" stroke-width="1.0" opacity="0.61"/>
<path d="M397.8 176.6l4.0 2.4" stroke="#8a1529" stroke-width="1.1" opacity="0.52"/>
<path d="M354.2 138.6l-1.3 -5.4" stroke="#c0324c" stroke-width="1.1" opacity="0.41"/>
<path d="M399.3 146.1l4.5 -1.7" stroke="#bc2c44" stroke-width="1.0" opacity="0.77"/>
<path d="M284.5 145.4l-5.0 -1.2" stroke="#bc2c44" stroke-width="0.9" opacity="0.45"/>
<path d="M401.8 135.7l6.2 -2.4" stroke="#7a1224" stroke-width="1.6" opacity="0.72"/>
<path d="M337.4 195.4l-3.6 2.8" stroke="#650d1c" stroke-width="1.3" opacity="0.36"/>
<path d="M302.5 127.6l-4.2 -3.4" stroke="#d8607a" stroke-width="0.9" opacity="0.47"/>
<path d="M353.0 189.8l-0.8 2.2" stroke="#d04860" stroke-width="1.5" opacity="0.67"/>
<path d="M379.5 195.1l2.2 2.3" stroke="#7a1224" stroke-width="1.0" opacity="0.72"/>
<path d="M387.8 138.2l1.3 -2.7" stroke="#961830" stroke-width="0.9" opacity="0.63"/>
<path d="M341.1 136.0l-1.9 -2.6" stroke="#961830" stroke-width="1.5" opacity="0.60"/>
<path d="M355.3 163.0l-2.0 -0.1" stroke="#70101f" stroke-width="1.5" opacity="0.41"/>
<path d="M298.0 141.1l-6.5 -0.9" stroke="#c0324c" stroke-width="1.4" opacity="0.54"/>
<path d="M289.8 193.0l-3.7 0.1" stroke="#d8607a" stroke-width="1.4" opacity="0.50"/>
<path d="M342.9 140.9l-1.6 -3.7" stroke="#5e0c1a" stroke-width="0.9" opacity="0.59"/>
<path d="M368.2 129.6l0.5 -3.8" stroke="#70101f" stroke-width="0.9" opacity="0.60"/>
<path d="M324.2 190.6l-1.8 2.0" stroke="#650d1c" stroke-width="1.0" opacity="0.58"/>
<path d="M418.5 137.4l2.1 -2.3" stroke="#bc2c44" stroke-width="0.8" opacity="0.75"/>
<path d="M331.6 171.9l-3.0 1.1" stroke="#d04860" stroke-width="1.4" opacity="0.64"/>
<path d="M413.0 169.2l4.6 1.7" stroke="#650d1c" stroke-width="1.1" opacity="0.62"/>
<path d="M317.9 191.4l-5.6 2.0" stroke="#c0324c" stroke-width="1.4" opacity="0.77"/>
<path d="M330.1 149.5l-2.7 -1.3" stroke="#d8607a" stroke-width="1.4" opacity="0.54"/>
<path d="M358.8 188.0l0.5 3.1" stroke="#5e0c1a" stroke-width="1.0" opacity="0.65"/>
<path d="M353.7 185.5l-0.5 3.5" stroke="#d04860" stroke-width="1.1" opacity="0.76"/>
<path d="M306.1 147.1l-4.3 -1.9" stroke="#8a1529" stroke-width="1.7" opacity="0.71"/>
<path d="M334.9 132.1l-2.8 -3.8" stroke="#eeb0bc" stroke-width="1.1" opacity="0.64"/>
<path d="M379.8 194.9l1.4 2.1" stroke="#c0324c" stroke-width="1.1" opacity="0.64"/>
<path d="M415.8 161.7l4.2 -1.6" stroke="#eeb0bc" stroke-width="1.0" opacity="0.42"/>
<path d="M410.6 196.0l4.0 1.3" stroke="#c0324c" stroke-width="1.2" opacity="0.53"/>
<path d="M338.2 137.8l-2.7 -4.4" stroke="#8a1529" stroke-width="1.3" opacity="0.59"/>
<path d="M298.1 152.7l-5.2 -2.4" stroke="#650d1c" stroke-width="1.1" opacity="0.37"/>
<path d="M344.6 165.4l-2.5 -0.0" stroke="#bc2c44" stroke-width="1.4" opacity="0.67"/>
<path d="M305.3 193.4l-6.2 1.5" stroke="#7c1225" stroke-width="0.9" opacity="0.59"/>
<path d="M403.0 202.7l4.4 4.1" stroke="#961830" stroke-width="1.5" opacity="0.73"/>
<path d="M290.6 159.7l-3.5 -0.1" stroke="#7a1224" stroke-width="1.5" opacity="0.40"/>
<path d="M371.2 182.0l1.1 2.9" stroke="#70101f" stroke-width="1.1" opacity="0.46"/>
<path d="M370.0 128.6l2.0 -2.7" stroke="#650d1c" stroke-width="1.7" opacity="0.60"/>
<path d="M441.4 147.1l6.4 -1.6" stroke="#7c1225" stroke-width="1.7" opacity="0.64"/>
<path d="M405.0 128.4l3.9 -3.4" stroke="#d04860" stroke-width="1.5" opacity="0.53"/>
<path d="M387.9 201.3l2.8 2.7" stroke="#eeb0bc" stroke-width="1.1" opacity="0.68"/>
<path d="M328.8 132.3l-3.1 -4.8" stroke="#70101f" stroke-width="0.9" opacity="0.62"/>
<path d="M410.8 161.8l2.5 -0.8" stroke="#d04860" stroke-width="1.4" opacity="0.39"/>
<path d="M371.3 120.2l3.8 -5.0" stroke="#70101f" stroke-width="1.0" opacity="0.47"/>
<path d="M403.7 168.3l3.6 -0.1" stroke="#8a1529" stroke-width="1.4" opacity="0.57"/>
<path d="M425.5 160.3l5.5 -1.3" stroke="#d8607a" stroke-width="1.1" opacity="0.75"/>
<path d="M421.2 149.8l3.4 -2.1" stroke="#bc2c44" stroke-width="1.1" opacity="0.47"/>
<path d="M374.1 123.8l2.6 -6.2" stroke="#c0324c" stroke-width="1.1" opacity="0.56"/>
<path d="M396.5 198.5l3.4 2.8" stroke="#7a1224" stroke-width="0.9" opacity="0.50"/>
<path d="M368.4 156.2l2.2 -0.9" stroke="#b82a42" stroke-width="1.6" opacity="0.58"/>
<path d="M331.9 173.3l-3.1 1.7" stroke="#70101f" stroke-width="1.4" opacity="0.79"/>
<path d="M339.2 170.8l-2.3 1.1" stroke="#d04860" stroke-width="1.1" opacity="0.40"/>
<path d="M412.9 169.5l2.4 1.3" stroke="#7a1224" stroke-width="1.0" opacity="0.49"/>
<path d="M365.2 185.2l2.1 2.7" stroke="#7a1224" stroke-width="1.6" opacity="0.68"/>
<path d="M294.0 151.9l-6.2 -1.7" stroke="#d04860" stroke-width="1.3" opacity="0.41"/>
<path d="M354.1 151.8l-0.4 -2.4" stroke="#7a1224" stroke-width="1.1" opacity="0.68"/>
<path d="M315.0 164.7l-3.4 0.1" stroke="#c0324c" stroke-width="1.5" opacity="0.52"/>
<path d="M295.0 171.0l-5.3 -1.0" stroke="#c0324c" stroke-width="1.3" opacity="0.46"/>
<path d="M367.8 144.0l0.5 -2.1" stroke="#eeb0bc" stroke-width="1.0" opacity="0.62"/>
<path d="M307.0 152.7l-2.7 0.4" stroke="#d04860" stroke-width="1.2" opacity="0.73"/>
<path d="M357.2 119.4l-0.0 -4.5" stroke="#8a1529" stroke-width="0.9" opacity="0.78"/>
<path d="M289.4 187.4l-5.3 0.7" stroke="#d04860" stroke-width="1.5" opacity="0.48"/>
<path d="M325.4 156.8l-2.9 -1.8" stroke="#c0324c" stroke-width="1.0" opacity="0.73"/>
<path d="M342.8 210.1l-2.3 7.2" stroke="#b82a42" stroke-width="1.6" opacity="0.49"/>
<path d="M347.2 199.0l-0.4 5.4" stroke="#d8607a" stroke-width="1.0" opacity="0.52"/>
<path d="M401.4 128.4l1.9 -2.4" stroke="#d04860" stroke-width="1.6" opacity="0.61"/>
<path d="M375.3 138.4l2.4 -4.8" stroke="#eeb0bc" stroke-width="1.1" opacity="0.42"/>
<path d="M359.4 138.7l1.5 -4.6" stroke="#70101f" stroke-width="1.2" opacity="0.75"/>
<path d="M442.3 174.6l6.4 1.8" stroke="#d8607a" stroke-width="1.2" opacity="0.41"/>
<path d="M324.4 164.8l-2.4 -0.8" stroke="#7a1224" stroke-width="1.0" opacity="0.60"/>
<path d="M308.9 162.7l-3.0 -0.9" stroke="#7a1224" stroke-width="1.6" opacity="0.65"/>
<path d="M433.3 168.0l4.0 -0.6" stroke="#c0324c" stroke-width="1.1" opacity="0.36"/>
<path d="M408.0 201.7l5.6 2.8" stroke="#7c1225" stroke-width="1.3" opacity="0.47"/>
<path d="M396.9 163.7l3.0 0.1" stroke="#b82a42" stroke-width="0.8" opacity="0.64"/>
<path d="M343.6 182.3l-2.5 3.3" stroke="#b82a42" stroke-width="0.9" opacity="0.57"/>
<path d="M394.4 198.3l2.3 5.0" stroke="#bc2c44" stroke-width="1.3" opacity="0.56"/>
<path d="M296.8 188.5l-5.6 1.8" stroke="#d8607a" stroke-width="1.1" opacity="0.50"/>
<path d="M396.0 135.1l2.8 -3.4" stroke="#7a1224" stroke-width="1.6" opacity="0.49"/>
<path d="M357.4 153.7l0.5 -2.6" stroke="#bc2c44" stroke-width="1.3" opacity="0.75"/>
<path d="M376.4 121.3l3.5 -3.6" stroke="#961830" stroke-width="1.5" opacity="0.69"/>
<path d="M406.1 174.5l2.7 1.7" stroke="#70101f" stroke-width="1.2" opacity="0.63"/>
<path d="M424.9 189.4l4.2 3.4" stroke="#7c1225" stroke-width="1.0" opacity="0.68"/>
<path d="M429.9 144.7l4.4 -1.1" stroke="#8a1529" stroke-width="1.7" opacity="0.71"/>
<path d="M274.0 162.2l-5.0 -1.7" stroke="#c0324c" stroke-width="1.4" opacity="0.65"/>
<path d="M353.5 160.1l-1.9 -2.2" stroke="#7a1224" stroke-width="1.1" opacity="0.78"/>
<path d="M335.6 188.9l-4.7 3.3" stroke="#8a1529" stroke-width="1.6" opacity="0.44"/>
<path d="M294.4 185.5l-5.5 1.7" stroke="#650d1c" stroke-width="0.9" opacity="0.74"/>
<path d="M305.7 151.7l-3.6 -1.8" stroke="#c0324c" stroke-width="0.9" opacity="0.53"/>
<path d="M394.0 156.6l4.1 0.4" stroke="#d04860" stroke-width="0.9" opacity="0.48"/>
<path d="M380.7 119.9l2.7 -3.9" stroke="#bc2c44" stroke-width="1.6" opacity="0.73"/>
<path d="M337.5 172.6l-3.9 1.0" stroke="#bc2c44" stroke-width="1.5" opacity="0.40"/>
<path d="M418.0 185.0l6.3 -0.1" stroke="#7c1225" stroke-width="0.8" opacity="0.43"/>
<path d="M334.7 156.0l-1.8 0.1" stroke="#bc2c44" stroke-width="1.7" opacity="0.42"/>
<path d="M366.8 184.4l1.2 1.6" stroke="#7a1224" stroke-width="1.7" opacity="0.37"/>
<path d="M393.2 133.0l3.4 -5.1" stroke="#70101f" stroke-width="1.2" opacity="0.78"/>
<path d="M290.0 179.0l-6.1 3.1" stroke="#8a1529" stroke-width="1.1" opacity="0.62"/>
<path d="M357.9 155.5l0.2 -3.7" stroke="#650d1c" stroke-width="0.9" opacity="0.38"/>
<path d="M404.0 132.4l6.0 -2.8" stroke="#d8607a" stroke-width="0.9" opacity="0.51"/>
<path d="M438.9 168.0l5.8 1.1" stroke="#961830" stroke-width="0.8" opacity="0.76"/>
<path d="M382.1 143.5l1.6 -1.5" stroke="#7a1224" stroke-width="1.2" opacity="0.57"/>
<path d="M288.0 145.4l-5.2 -3.9" stroke="#d8607a" stroke-width="1.6" opacity="0.56"/>
<path d="M342.2 163.5l-1.6 -0.6" stroke="#5e0c1a" stroke-width="1.3" opacity="0.49"/>
<path d="M443.0 160.1l7.0 1.0" stroke="#8a1529" stroke-width="1.1" opacity="0.67"/>
<path d="M331.7 120.5l-1.1 -4.0" stroke="#5e0c1a" stroke-width="1.0" opacity="0.59"/>
<path d="M375.8 146.1l2.5 -1.6" stroke="#d8607a" stroke-width="1.6" opacity="0.54"/>
<path d="M352.8 152.1l-0.6 -4.1" stroke="#8a1529" stroke-width="1.1" opacity="0.73"/>
<path d="M388.3 162.4l3.3 -1.4" stroke="#eeb0bc" stroke-width="0.8" opacity="0.73"/>
<path d="M325.8 136.6l-4.0 -1.8" stroke="#d8607a" stroke-width="1.4" opacity="0.71"/>
<path d="M326.3 193.1l-4.7 2.5" stroke="#b82a42" stroke-width="1.6" opacity="0.79"/>
<path d="M375.2 157.0l1.7 -0.9" stroke="#7a1224" stroke-width="1.1" opacity="0.72"/>
<path d="M354.4 191.6l-0.6 3.3" stroke="#7c1225" stroke-width="1.5" opacity="0.63"/>
<path d="M297.0 154.2l-3.2 0.7" stroke="#bc2c44" stroke-width="0.9" opacity="0.42"/>
<path d="M317.1 171.7l-3.9 2.5" stroke="#bc2c44" stroke-width="1.5" opacity="0.46"/>
<path d="M311.0 143.9l-2.4 -1.2" stroke="#7c1225" stroke-width="1.2" opacity="0.38"/>
<path d="M383.8 160.2l2.3 -0.2" stroke="#d04860" stroke-width="1.3" opacity="0.47"/>
<path d="M310.0 202.2l-3.3 1.3" stroke="#70101f" stroke-width="1.6" opacity="0.61"/>
<path d="M321.8 170.9l-4.2 2.5" stroke="#650d1c" stroke-width="0.9" opacity="0.74"/>
<path d="M357.4 176.9l0.1 3.0" stroke="#7a1224" stroke-width="1.5" opacity="0.60"/>
<path d="M343.2 146.1l-1.2 -2.4" stroke="#650d1c" stroke-width="1.4" opacity="0.58"/>
<path d="M423.2 188.6l2.5 1.8" stroke="#5e0c1a" stroke-width="0.8" opacity="0.66"/>
<path d="M323.8 146.2l-3.0 -0.4" stroke="#961830" stroke-width="1.4" opacity="0.36"/>
<path d="M321.7 172.4l-3.5 1.6" stroke="#eeb0bc" stroke-width="1.0" opacity="0.40"/>
<path d="M368.4 171.7l1.1 2.1" stroke="#7a1224" stroke-width="1.3" opacity="0.38"/>
<path d="M378.1 209.1l2.6 4.0" stroke="#b82a42" stroke-width="1.5" opacity="0.74"/>
<path d="M432.2 190.8l5.1 2.6" stroke="#5e0c1a" stroke-width="1.4" opacity="0.71"/>
<path d="M347.9 159.4l-1.9 -0.7" stroke="#bc2c44" stroke-width="1.6" opacity="0.60"/>
<path d="M362.0 162.7l1.5 -0.7" stroke="#bc2c44" stroke-width="1.6" opacity="0.80"/>
<path d="M345.5 206.4l-1.6 4.2" stroke="#7c1225" stroke-width="1.5" opacity="0.52"/>
<path d="M427.6 170.5l3.5 1.4" stroke="#b82a42" stroke-width="0.9" opacity="0.44"/>
<path d="M355.5 210.4l-0.1 5.9" stroke="#8a1529" stroke-width="1.1" opacity="0.40"/>
<path d="M396.9 124.8l4.0 -4.0" stroke="#961830" stroke-width="1.1" opacity="0.62"/>
<path d="M316.8 203.5l-4.5 6.2" stroke="#7c1225" stroke-width="1.4" opacity="0.72"/>
<path d="M328.7 147.7l-2.1 -2.5" stroke="#961830" stroke-width="1.0" opacity="0.58"/>
<path d="M391.7 136.0l2.3 -2.1" stroke="#5e0c1a" stroke-width="1.7" opacity="0.72"/>
<path d="M293.4 154.1l-4.9 -0.8" stroke="#8a1529" stroke-width="1.5" opacity="0.74"/>
<path d="M286.2 160.6l-5.0 -2.1" stroke="#bc2c44" stroke-width="1.0" opacity="0.74"/>
<path d="M359.4 128.5l0.3 -3.2" stroke="#d04860" stroke-width="0.9" opacity="0.59"/>
<path d="M328.5 202.3l-4.7 3.0" stroke="#5e0c1a" stroke-width="1.5" opacity="0.52"/>
<path d="M332.2 147.4l-1.5 -2.0" stroke="#650d1c" stroke-width="1.3" opacity="0.42"/>
<path d="M398.9 161.9l2.8 0.2" stroke="#c0324c" stroke-width="0.9" opacity="0.44"/>
<path d="M329.0 162.0l-3.4 0.9" stroke="#b82a42" stroke-width="1.7" opacity="0.50"/>
<path d="M349.7 158.3l-2.4 -1.1" stroke="#d8607a" stroke-width="0.8" opacity="0.67"/>
<path d="M444.8 164.7l4.7 -1.5" stroke="#7a1224" stroke-width="1.1" opacity="0.65"/>
<path d="M356.7 133.7l-1.7 -4.3" stroke="#5e0c1a" stroke-width="1.0" opacity="0.75"/>
<path d="M319.2 131.8l-2.2 -2.7" stroke="#eeb0bc" stroke-width="1.0" opacity="0.43"/>
<path d="M372.5 177.8l1.4 3.1" stroke="#d8607a" stroke-width="0.9" opacity="0.42"/>
<path d="M380.3 164.5l2.3 0.3" stroke="#70101f" stroke-width="0.8" opacity="0.37"/>
<path d="M356.6 155.8l-0.8 -2.5" stroke="#b82a42" stroke-width="1.2" opacity="0.69"/>
<path d="M320.9 175.9l-2.5 0.3" stroke="#bc2c44" stroke-width="1.0" opacity="0.60"/>
<path d="M368.3 181.7l0.6 3.8" stroke="#d8607a" stroke-width="1.0" opacity="0.39"/>
<path d="M327.4 191.2l-5.3 2.3" stroke="#70101f" stroke-width="1.0" opacity="0.72"/>
<path d="M345.8 199.3l-1.3 3.3" stroke="#8a1529" stroke-width="1.7" opacity="0.64"/>
<path d="M324.9 191.4l-2.0 2.5" stroke="#d04860" stroke-width="1.2" opacity="0.75"/>
<path d="M329.1 146.3l-2.7 -1.6" stroke="#961830" stroke-width="1.6" opacity="0.77"/>
<path d="M292.9 138.3l-4.6 -2.6" stroke="#b82a42" stroke-width="1.5" opacity="0.58"/>
<path d="M308.8 141.4l-4.1 -2.0" stroke="#bc2c44" stroke-width="1.0" opacity="0.40"/>
<path d="M287.4 161.3l-3.5 -0.8" stroke="#d04860" stroke-width="1.6" opacity="0.56"/>
<path d="M386.4 177.4l1.7 1.3" stroke="#5e0c1a" stroke-width="1.5" opacity="0.60"/>
<path d="M378.2 204.3l4.1 5.7" stroke="#7a1224" stroke-width="1.3" opacity="0.61"/>
<path d="M382.9 190.1l2.1 1.4" stroke="#70101f" stroke-width="1.1" opacity="0.53"/>
<path d="M318.2 123.9l-5.2 -2.4" stroke="#961830" stroke-width="1.4" opacity="0.45"/>
<path d="M322.9 140.3l-2.7 -3.5" stroke="#961830" stroke-width="1.2" opacity="0.38"/>
<path d="M351.6 180.8l-1.7 1.8" stroke="#7a1224" stroke-width="0.9" opacity="0.64"/>
<path d="M344.5 132.5l-2.1 -5.6" stroke="#5e0c1a" stroke-width="1.2" opacity="0.41"/>
<path d="M337.3 203.0l-2.9 4.7" stroke="#bc2c44" stroke-width="0.9" opacity="0.80"/>
<path d="M401.2 202.2l4.2 4.9" stroke="#b82a42" stroke-width="1.6" opacity="0.66"/>
<path d="M338.8 147.3l-4.0 -1.6" stroke="#7c1225" stroke-width="1.3" opacity="0.74"/>
<path d="M418.5 161.3l5.5 -1.7" stroke="#70101f" stroke-width="1.0" opacity="0.46"/>
<path d="M427.3 147.5l6.2 -0.2" stroke="#eeb0bc" stroke-width="1.6" opacity="0.69"/>
<path d="M284.2 150.1l-6.5 0.7" stroke="#8a1529" stroke-width="1.1" opacity="0.67"/>
<path d="M411.8 132.6l2.0 -2.4" stroke="#8a1529" stroke-width="1.3" opacity="0.45"/>
<path d="M309.5 180.1l-4.7 0.8" stroke="#b82a42" stroke-width="0.8" opacity="0.77"/>
<path d="M302.2 187.2l-4.6 3.4" stroke="#7c1225" stroke-width="0.8" opacity="0.39"/>
<path d="M309.1 131.5l-5.5 -4.6" stroke="#bc2c44" stroke-width="0.9" opacity="0.71"/>
<path d="M387.6 164.6l2.8 0.4" stroke="#eeb0bc" stroke-width="1.3" opacity="0.59"/>
<path d="M385.4 198.0l3.4 4.3" stroke="#7a1224" stroke-width="1.2" opacity="0.58"/>
<path d="M416.3 134.9l3.6 -2.6" stroke="#70101f" stroke-width="1.1" opacity="0.58"/>
<path d="M355.5 177.4l-0.2 2.8" stroke="#7a1224" stroke-width="0.9" opacity="0.45"/>
<path d="M283.1 183.4l-4.1 0.5" stroke="#d04860" stroke-width="0.9" opacity="0.44"/>
<path d="M297.6 185.9l-6.2 2.3" stroke="#5e0c1a" stroke-width="1.2" opacity="0.56"/>
<path d="M373.8 207.2l-0.2 4.8" stroke="#8a1529" stroke-width="0.8" opacity="0.76"/>
<path d="M291.3 168.8l-4.3 0.9" stroke="#c0324c" stroke-width="1.7" opacity="0.36"/>
<path d="M320.0 143.6l-3.3 -0.6" stroke="#7a1224" stroke-width="1.0" opacity="0.56"/>
<path d="M378.9 152.4l2.1 -2.7" stroke="#5e0c1a" stroke-width="1.2" opacity="0.54"/>
<path d="M377.3 196.4l3.3 3.3" stroke="#d04860" stroke-width="1.0" opacity="0.80"/>
<path d="M277.6 149.8l-5.6 -1.2" stroke="#961830" stroke-width="1.2" opacity="0.49"/>
<path d="M446.8 154.4l6.5 -2.8" stroke="#7a1224" stroke-width="0.9" opacity="0.37"/>
<path d="M358.7 164.1l-1.6 0.6" stroke="#961830" stroke-width="1.5" opacity="0.79"/>
<path d="M420.7 191.4l3.3 0.3" stroke="#d8607a" stroke-width="0.9" opacity="0.68"/>
<path d="M421.3 161.2l5.9 -0.6" stroke="#961830" stroke-width="0.8" opacity="0.75"/>
<path d="M404.7 140.2l4.0 -3.7" stroke="#c0324c" stroke-width="1.6" opacity="0.41"/>
<path d="M307.3 144.8l-4.5 -2.9" stroke="#b82a42" stroke-width="1.4" opacity="0.67"/>
<path d="M409.8 127.8l3.7 -1.7" stroke="#7a1224" stroke-width="1.3" opacity="0.74"/>
<path d="M346.9 176.1l-2.9 2.6" stroke="#8a1529" stroke-width="1.7" opacity="0.54"/>
<path d="M335.1 161.8l-3.7 0.9" stroke="#5e0c1a" stroke-width="1.2" opacity="0.60"/>
<path d="M418.3 145.0l5.1 -4.0" stroke="#c0324c" stroke-width="1.5" opacity="0.49"/>
<path d="M391.9 194.9l3.7 2.8" stroke="#d8607a" stroke-width="1.6" opacity="0.59"/>
<path d="M413.9 147.0l4.1 -3.5" stroke="#bc2c44" stroke-width="1.2" opacity="0.55"/>
<path d="M319.9 195.1l-3.1 1.1" stroke="#d8607a" stroke-width="1.7" opacity="0.79"/>
<path d="M343.4 182.5l-3.6 3.5" stroke="#961830" stroke-width="1.0" opacity="0.38"/>
<path d="M301.7 128.1l-6.4 -3.8" stroke="#8a1529" stroke-width="1.1" opacity="0.57"/>
<path d="M354.6 205.0l0.8 7.0" stroke="#d04860" stroke-width="1.0" opacity="0.75"/>
<path d="M309.7 142.9l-3.3 -1.9" stroke="#7c1225" stroke-width="1.1" opacity="0.79"/>
<path d="M308.3 152.3l-2.5 -0.1" stroke="#7a1224" stroke-width="1.0" opacity="0.69"/>
<path d="M399.6 188.8l2.6 0.7" stroke="#7c1225" stroke-width="1.2" opacity="0.56"/>
<path d="M391.3 172.4l4.5 1.2" stroke="#b82a42" stroke-width="1.2" opacity="0.58"/>
<path d="M374.0 206.2l2.5 3.4" stroke="#7c1225" stroke-width="0.9" opacity="0.71"/>
<path d="M297.8 165.7l-5.6 -0.1" stroke="#c0324c" stroke-width="1.5" opacity="0.49"/>
<path d="M397.2 151.0l4.9 -0.2" stroke="#b82a42" stroke-width="1.3" opacity="0.66"/>
<path d="M359.9 125.6l0.6 -4.7" stroke="#d8607a" stroke-width="0.9" opacity="0.66"/>
<path d="M351.6 199.4l-1.2 3.0" stroke="#b82a42" stroke-width="1.1" opacity="0.41"/>
<path d="M420.4 175.2l5.9 -0.5" stroke="#650d1c" stroke-width="1.6" opacity="0.57"/>
<path d="M342.1 180.6l-2.0 2.1" stroke="#d04860" stroke-width="1.6" opacity="0.35"/>
<path d="M389.2 173.8l2.1 1.7" stroke="#bc2c44" stroke-width="1.5" opacity="0.46"/>
<path d="M399.3 129.8l5.4 -3.1" stroke="#7c1225" stroke-width="0.9" opacity="0.45"/>
<path d="M411.4 162.8l3.7 0.2" stroke="#bc2c44" stroke-width="1.1" opacity="0.68"/>
<path d="M311.8 153.8l-3.9 -0.8" stroke="#70101f" stroke-width="1.0" opacity="0.70"/>
<path d="M380.0 129.5l3.7 -4.0" stroke="#7a1224" stroke-width="1.0" opacity="0.55"/>
<path d="M329.2 161.3l-4.0 -0.7" stroke="#8a1529" stroke-width="1.6" opacity="0.39"/>
<path d="M410.6 134.7l4.5 -4.8" stroke="#bc2c44" stroke-width="1.1" opacity="0.54"/>
<path d="M380.8 179.7l1.7 1.3" stroke="#b82a42" stroke-width="1.0" opacity="0.44"/>
<path d="M292.2 150.8l-4.6 -2.4" stroke="#7a1224" stroke-width="1.2" opacity="0.65"/>
<path d="M400.4 177.4l2.6 -0.0" stroke="#eeb0bc" stroke-width="1.0" opacity="0.55"/>
<path d="M312.6 137.7l-2.3 -2.6" stroke="#b82a42" stroke-width="1.1" opacity="0.38"/>
<path d="M429.0 148.6l5.0 0.8" stroke="#7a1224" stroke-width="1.1" opacity="0.54"/>
<path d="M415.6 136.6l2.8 -1.6" stroke="#eeb0bc" stroke-width="1.7" opacity="0.80"/>
<path d="M412.6 176.0l5.4 2.6" stroke="#8a1529" stroke-width="1.1" opacity="0.72"/>
<path d="M319.2 165.0l-2.5 -0.1" stroke="#8a1529" stroke-width="1.5" opacity="0.48"/>
<path d="M418.4 169.5l4.3 -0.5" stroke="#d04860" stroke-width="1.2" opacity="0.63"/>
<path d="M396.1 164.7l2.1 0.5" stroke="#7a1224" stroke-width="1.2" opacity="0.48"/>
<path d="M298.9 138.5l-3.2 -0.6" stroke="#bc2c44" stroke-width="1.1" opacity="0.41"/>
<path d="M327.4 165.4l-3.7 -0.6" stroke="#b82a42" stroke-width="1.6" opacity="0.64"/>
<path d="M448.7 162.9l7.0 1.5" stroke="#d8607a" stroke-width="1.3" opacity="0.61"/>
<path d="M299.6 171.7l-2.5 -0.2" stroke="#bc2c44" stroke-width="1.4" opacity="0.66"/>
<path d="M417.5 189.9l6.6 0.6" stroke="#7a1224" stroke-width="0.9" opacity="0.42"/>
<path d="M365.3 137.6l1.1 -4.9" stroke="#7a1224" stroke-width="1.3" opacity="0.53"/>
<path d="M343.0 123.4l-1.1 -4.3" stroke="#961830" stroke-width="1.4" opacity="0.76"/>
<path d="M334.3 180.8l-1.6 1.6" stroke="#7a1224" stroke-width="1.5" opacity="0.62"/>
<path d="M408.1 193.9l2.0 2.0" stroke="#bc2c44" stroke-width="1.0" opacity="0.48"/>
<path d="M368.6 119.2l3.0 -4.9" stroke="#7c1225" stroke-width="1.5" opacity="0.66"/>
<path d="M358.3 132.4l-0.9 -3.7" stroke="#c0324c" stroke-width="1.3" opacity="0.62"/>
<path d="M418.5 198.4l3.2 3.5" stroke="#bc2c44" stroke-width="1.5" opacity="0.63"/>
<path d="M380.7 186.4l2.5 1.9" stroke="#961830" stroke-width="1.2" opacity="0.68"/>
<path d="M314.6 153.8l-5.0 -1.4" stroke="#70101f" stroke-width="1.3" opacity="0.56"/>
<path d="M385.2 164.1l4.1 1.5" stroke="#bc2c44" stroke-width="0.8" opacity="0.50"/>
<path d="M327.8 154.0l-2.6 -0.6" stroke="#8a1529" stroke-width="1.2" opacity="0.40"/>
<path d="M313.0 132.9l-2.7 -2.3" stroke="#d8607a" stroke-width="1.5" opacity="0.57"/>
<path d="M286.6 185.9l-4.5 2.4" stroke="#7a1224" stroke-width="1.4" opacity="0.53"/>
<path d="M355.4 119.0l-0.7 -3.0" stroke="#8a1529" stroke-width="1.6" opacity="0.59"/>
<path d="M393.4 147.3l3.2 -1.2" stroke="#d04860" stroke-width="1.6" opacity="0.68"/>
<path d="M383.4 121.5l2.1 -2.1" stroke="#bc2c44" stroke-width="1.7" opacity="0.68"/>
<path d="M405.6 155.1l2.3 -1.5" stroke="#d04860" stroke-width="0.9" opacity="0.69"/>
<path d="M438.7 161.5l3.7 -0.1" stroke="#8a1529" stroke-width="1.0" opacity="0.35"/>
<path d="M273.3 170.1l-5.1 -1.7" stroke="#d04860" stroke-width="1.1" opacity="0.40"/>
<path d="M305.9 148.0l-2.9 -0.8" stroke="#8a1529" stroke-width="1.5" opacity="0.46"/>
<path d="M340.7 161.2l-1.5 -0.2" stroke="#961830" stroke-width="0.9" opacity="0.40"/>
<path d="M327.7 178.5l-3.1 2.0" stroke="#8a1529" stroke-width="1.3" opacity="0.68"/>
<path d="M305.8 183.9l-2.8 2.5" stroke="#70101f" stroke-width="0.9" opacity="0.79"/>
<path d="M336.3 187.1l-2.2 1.3" stroke="#8a1529" stroke-width="1.1" opacity="0.80"/>
<path d="M351.0 130.7l-2.0 -4.8" stroke="#70101f" stroke-width="1.5" opacity="0.55"/>
<path d="M388.3 148.3l5.0 -1.3" stroke="#d04860" stroke-width="1.4" opacity="0.71"/>
<path d="M393.5 194.5l3.3 5.4" stroke="#bc2c44" stroke-width="1.7" opacity="0.76"/>
<path d="M430.7 179.7l4.3 0.8" stroke="#eeb0bc" stroke-width="1.6" opacity="0.44"/>
<path d="M392.3 182.0l4.8 1.2" stroke="#8a1529" stroke-width="1.5" opacity="0.61"/>
<path d="M441.6 154.2l5.3 1.0" stroke="#8a1529" stroke-width="1.6" opacity="0.72"/>
<path d="M425.7 192.9l2.4 2.0" stroke="#d04860" stroke-width="1.2" opacity="0.58"/>
<path d="M319.4 147.8l-5.6 -0.7" stroke="#7a1224" stroke-width="1.3" opacity="0.56"/>
<path d="M329.5 127.3l-3.2 -3.3" stroke="#5e0c1a" stroke-width="0.8" opacity="0.46"/>
<path d="M434.1 139.4l7.4 -1.6" stroke="#d04860" stroke-width="0.8" opacity="0.36"/>
<path d="M346.7 139.8l-0.4 -2.8" stroke="#7a1224" stroke-width="1.6" opacity="0.39"/>
<path d="M392.8 132.7l3.4 -1.7" stroke="#d04860" stroke-width="0.8" opacity="0.39"/>
<path d="M339.5 135.3l-3.7 -4.4" stroke="#961830" stroke-width="1.5" opacity="0.39"/>
<path d="M388.6 203.7l4.1 3.7" stroke="#c0324c" stroke-width="0.9" opacity="0.64"/>
<path d="M315.9 163.8l-2.1 0.4" stroke="#c0324c" stroke-width="0.9" opacity="0.59"/>
<path d="M403.5 149.9l5.3 -2.1" stroke="#bc2c44" stroke-width="1.6" opacity="0.53"/>
<path d="M353.8 121.4l1.0 -3.7" stroke="#bc2c44" stroke-width="1.3" opacity="0.70"/>
<path d="M417.5 128.5l4.9 -5.6" stroke="#d8607a" stroke-width="0.8" opacity="0.39"/>
<path d="M425.9 165.6l2.9 0.3" stroke="#d04860" stroke-width="1.2" opacity="0.41"/>
<path d="M319.3 151.6l-2.8 -0.2" stroke="#7a1224" stroke-width="1.3" opacity="0.38"/>
<path d="M355.2 132.9l-0.3 -3.8" stroke="#c0324c" stroke-width="0.9" opacity="0.67"/>
<path d="M304.9 187.4l-3.0 1.5" stroke="#b82a42" stroke-width="1.0" opacity="0.78"/>
<path d="M388.3 191.2l4.6 3.9" stroke="#d8607a" stroke-width="1.0" opacity="0.76"/>
<path d="M351.9 159.2l-2.1 -2.2" stroke="#7c1225" stroke-width="1.3" opacity="0.67"/>
<path d="M435.8 143.6l3.9 -1.5" stroke="#b82a42" stroke-width="1.5" opacity="0.56"/>
<path d="M301.2 169.3l-3.8 1.9" stroke="#eeb0bc" stroke-width="1.0" opacity="0.39"/>
<path d="M342.4 148.7l-1.7 -1.7" stroke="#bc2c44" stroke-width="1.5" opacity="0.68"/>
<path d="M376.7 206.8l1.2 6.2" stroke="#bc2c44" stroke-width="1.0" opacity="0.76"/>
<path d="M375.5 118.0l0.3 -4.1" stroke="#d8607a" stroke-width="1.7" opacity="0.66"/>
<path d="M387.7 184.3l1.7 1.3" stroke="#b82a42" stroke-width="1.0" opacity="0.47"/>
<path d="M340.7 176.4l-2.8 1.7" stroke="#5e0c1a" stroke-width="1.0" opacity="0.46"/>
<path d="M334.6 144.5l-4.2 -1.3" stroke="#70101f" stroke-width="1.2" opacity="0.66"/>
<path d="M290.5 178.0l-4.5 0.8" stroke="#7c1225" stroke-width="1.6" opacity="0.76"/>
<path d="M282.6 170.4l-2.7 0.8" stroke="#7c1225" stroke-width="1.5" opacity="0.65"/>
<path d="M294.1 165.7l-4.6 -0.4" stroke="#8a1529" stroke-width="1.1" opacity="0.69"/>
<path d="M307.9 194.5l-6.2 2.8" stroke="#5e0c1a" stroke-width="1.3" opacity="0.79"/>
<path d="M370.2 169.7l1.0 1.1" stroke="#bc2c44" stroke-width="1.6" opacity="0.76"/>
<path d="M307.5 171.4l-4.1 1.2" stroke="#d8607a" stroke-width="1.3" opacity="0.70"/>
<path d="M400.0 186.3l2.7 1.9" stroke="#bc2c44" stroke-width="1.0" opacity="0.71"/>
<path d="M347.3 192.8l-0.0 3.2" stroke="#b82a42" stroke-width="1.5" opacity="0.63"/>
<path d="M405.7 184.2l3.1 2.3" stroke="#7a1224" stroke-width="1.3" opacity="0.43"/>
<path d="M353.8 205.1l-1.7 3.1" stroke="#70101f" stroke-width="1.4" opacity="0.47"/>
<path d="M317.0 184.9l-2.3 1.1" stroke="#650d1c" stroke-width="0.8" opacity="0.36"/>
<path d="M391.7 136.8l2.8 -4.6" stroke="#d04860" stroke-width="1.3" opacity="0.41"/>
<path d="M381.8 202.7l1.3 3.4" stroke="#eeb0bc" stroke-width="0.9" opacity="0.70"/>
<path d="M336.6 201.1l-2.3 4.1" stroke="#7a1224" stroke-width="0.9" opacity="0.48"/>
<path d="M308.0 147.4l-2.4 -0.6" stroke="#650d1c" stroke-width="1.2" opacity="0.77"/>
<path d="M443.6 158.7l5.1 1.8" stroke="#7a1224" stroke-width="1.4" opacity="0.67"/>
<path d="M360.2 200.2l-0.7 5.0" stroke="#8a1529" stroke-width="1.1" opacity="0.65"/>
<path d="M397.3 173.4l2.7 1.0" stroke="#7a1224" stroke-width="0.9" opacity="0.80"/>
<path d="M306.3 198.6l-3.5 1.0" stroke="#c0324c" stroke-width="1.4" opacity="0.44"/>
<path d="M386.6 127.4l4.2 -3.1" stroke="#650d1c" stroke-width="1.3" opacity="0.64"/>
<path d="M346.5 125.7l-0.3 -3.0" stroke="#c0324c" stroke-width="1.1" opacity="0.59"/>
<path d="M380.1 167.5l2.7 -0.3" stroke="#70101f" stroke-width="1.2" opacity="0.76"/>
<path d="M328.9 135.4l-1.9 -3.2" stroke="#b82a42" stroke-width="1.3" opacity="0.76"/>
<path d="M360.8 126.0l0.8 -3.8" stroke="#d04860" stroke-width="1.2" opacity="0.57"/>
<path d="M325.0 186.2l-2.5 1.4" stroke="#d8607a" stroke-width="1.4" opacity="0.64"/>
<path d="M352.3 204.2l-1.8 3.5" stroke="#d8607a" stroke-width="1.0" opacity="0.59"/>
<path d="M412.2 157.8l4.7 -0.8" stroke="#d8607a" stroke-width="1.3" opacity="0.36"/>
<path d="M402.0 170.6l2.6 1.0" stroke="#d8607a" stroke-width="1.4" opacity="0.44"/>
<path d="M350.6 186.9l-0.9 3.0" stroke="#eeb0bc" stroke-width="0.8" opacity="0.57"/>
<path d="M388.7 151.5l2.0 -0.7" stroke="#70101f" stroke-width="1.3" opacity="0.37"/>
<path d="M295.6 138.2l-5.2 -2.5" stroke="#b82a42" stroke-width="1.0" opacity="0.48"/>
<path d="M430.7 176.2l4.3 2.1" stroke="#961830" stroke-width="1.1" opacity="0.79"/>
<path d="M424.6 172.6l5.8 -0.1" stroke="#5e0c1a" stroke-width="0.9" opacity="0.79"/>
<path d="M390.0 162.2l3.2 -0.2" stroke="#7a1224" stroke-width="1.1" opacity="0.66"/>
<path d="M363.2 168.1l2.2 1.7" stroke="#70101f" stroke-width="1.0" opacity="0.62"/>
<path d="M412.6 134.0l4.5 -2.0" stroke="#7c1225" stroke-width="1.7" opacity="0.49"/>
<path d="M275.6 176.5l-3.6 0.1" stroke="#7a1224" stroke-width="1.0" opacity="0.66"/>
<path d="M422.6 134.6l6.3 -3.5" stroke="#c0324c" stroke-width="1.4" opacity="0.43"/>
<path d="M385.6 163.7l3.4 0.7" stroke="#bc2c44" stroke-width="1.5" opacity="0.55"/>
<path d="M424.5 146.1l6.2 -0.5" stroke="#b82a42" stroke-width="1.2" opacity="0.60"/>
<path d="M377.8 204.1l2.3 5.5" stroke="#c0324c" stroke-width="1.4" opacity="0.78"/>
<path d="M444.6 173.5l7.3 0.4" stroke="#650d1c" stroke-width="1.6" opacity="0.76"/>
<path d="M373.0 157.6l3.0 -2.4" stroke="#961830" stroke-width="0.8" opacity="0.48"/>
<path d="M420.3 139.5l3.9 -3.1" stroke="#5e0c1a" stroke-width="1.6" opacity="0.79"/>
<path d="M320.3 144.5l-4.2 -0.8" stroke="#eeb0bc" stroke-width="1.0" opacity="0.65"/>
<path d="M413.4 135.4l5.1 -4.9" stroke="#bc2c44" stroke-width="1.0" opacity="0.49"/>
<path d="M299.0 182.0l-4.4 1.0" stroke="#d04860" stroke-width="1.0" opacity="0.51"/>
<path d="M343.3 206.6l-3.3 5.2" stroke="#d8607a" stroke-width="1.0" opacity="0.75"/>
<path d="M324.9 121.6l-2.7 -3.4" stroke="#650d1c" stroke-width="1.6" opacity="0.41"/>
<path d="M338.6 152.8l-3.4 -1.1" stroke="#8a1529" stroke-width="0.9" opacity="0.51"/>
<path d="M424.2 170.3l4.8 -1.0" stroke="#d04860" stroke-width="1.1" opacity="0.53"/>
<path d="M364.5 151.3l1.5 -2.6" stroke="#650d1c" stroke-width="1.2" opacity="0.49"/>
<path d="M442.0 170.5l3.8 -0.1" stroke="#d8607a" stroke-width="1.0" opacity="0.63"/>
<path d="M336.7 129.3l-3.6 -2.6" stroke="#650d1c" stroke-width="0.9" opacity="0.40"/>
<path d="M407.4 136.3l4.3 -3.2" stroke="#bc2c44" stroke-width="0.9" opacity="0.51"/>
<path d="M339.6 175.8l-2.3 1.1" stroke="#eeb0bc" stroke-width="1.6" opacity="0.37"/>
<path d="M383.5 200.2l1.5 3.3" stroke="#b82a42" stroke-width="1.1" opacity="0.64"/>
<path d="M349.4 168.1l-2.8 1.4" stroke="#b82a42" stroke-width="1.2" opacity="0.77"/>
<path d="M294.7 144.9l-2.4 -1.7" stroke="#70101f" stroke-width="0.9" opacity="0.36"/>
<path d="M370.1 129.3l1.7 -3.8" stroke="#c0324c" stroke-width="1.2" opacity="0.57"/>
<path d="M309.6 201.1l-2.9 1.4" stroke="#5e0c1a" stroke-width="1.3" opacity="0.52"/>
<path d="M375.2 183.1l1.4 2.9" stroke="#eeb0bc" stroke-width="1.3" opacity="0.66"/>
<path d="M294.6 178.6l-4.9 0.7" stroke="#8a1529" stroke-width="1.1" opacity="0.68"/>
<path d="M337.5 186.3l-1.2 2.1" stroke="#650d1c" stroke-width="1.2" opacity="0.77"/>
<path d="M389.9 148.9l2.1 -0.8" stroke="#7a1224" stroke-width="1.7" opacity="0.72"/>
<path d="M397.2 167.5l4.8 0.6" stroke="#c0324c" stroke-width="1.1" opacity="0.45"/>
<path d="M419.4 170.6l5.0 2.0" stroke="#8a1529" stroke-width="0.9" opacity="0.35"/>
<path d="M339.0 193.0l-2.0 5.5" stroke="#b82a42" stroke-width="1.3" opacity="0.56"/>
<path d="M336.7 168.5l-3.9 -0.5" stroke="#7c1225" stroke-width="1.6" opacity="0.42"/>
<path d="M314.9 162.9l-4.9 0.4" stroke="#8a1529" stroke-width="1.1" opacity="0.37"/>
<path d="M368.4 190.7l0.4 5.6" stroke="#eeb0bc" stroke-width="0.9" opacity="0.39"/>
<path d="M375.3 202.2l3.4 5.6" stroke="#c0324c" stroke-width="1.3" opacity="0.63"/>
<path d="M281.6 155.3l-6.5 -0.5" stroke="#961830" stroke-width="0.8" opacity="0.71"/>
<path d="M340.9 153.0l-3.5 -2.2" stroke="#961830" stroke-width="1.4" opacity="0.66"/>
<path d="M366.5 168.6l2.3 0.5" stroke="#eeb0bc" stroke-width="1.0" opacity="0.37"/>
<path d="M390.5 146.8l3.9 -2.5" stroke="#d8607a" stroke-width="1.2" opacity="0.57"/>
<path d="M411.1 188.3l5.0 3.7" stroke="#b82a42" stroke-width="1.5" opacity="0.44"/>
<path d="M382.6 157.4l2.8 -1.5" stroke="#bc2c44" stroke-width="1.0" opacity="0.67"/>
<path d="M306.7 127.5l-5.3 -2.1" stroke="#5e0c1a" stroke-width="1.3" opacity="0.67"/>
<path d="M303.8 183.6l-5.0 0.3" stroke="#d8607a" stroke-width="1.6" opacity="0.47"/>
<path d="M320.0 181.7l-5.1 0.8" stroke="#7c1225" stroke-width="1.4" opacity="0.45"/>
<path d="M317.2 172.0l-3.7 0.6" stroke="#7a1224" stroke-width="1.7" opacity="0.58"/>
<path d="M276.1 174.9l-4.7 0.9" stroke="#70101f" stroke-width="0.8" opacity="0.51"/>
<path d="M323.5 148.1l-3.7 -0.5" stroke="#c0324c" stroke-width="1.1" opacity="0.50"/>
<path d="M332.7 181.3l-2.4 0.7" stroke="#d8607a" stroke-width="0.9" opacity="0.71"/>
<path d="M315.3 133.5l-3.3 -3.5" stroke="#70101f" stroke-width="1.4" opacity="0.36"/>
<path d="M364.7 208.9l0.2 3.9" stroke="#7c1225" stroke-width="1.3" opacity="0.75"/>
<path d="M281.1 166.5l-4.7 2.0" stroke="#bc2c44" stroke-width="1.2" opacity="0.40"/>
<path d="M273.5 160.9l-6.4 -2.4" stroke="#bc2c44" stroke-width="1.6" opacity="0.74"/>
<path d="M432.6 169.6l3.6 1.6" stroke="#5e0c1a" stroke-width="0.8" opacity="0.45"/>
<path d="M279.6 149.3l-6.7 -2.4" stroke="#5e0c1a" stroke-width="1.5" opacity="0.57"/>
<path d="M386.0 148.9l1.6 -1.4" stroke="#7c1225" stroke-width="1.1" opacity="0.62"/>
<path d="M293.1 167.8l-2.9 0.7" stroke="#7a1224" stroke-width="1.5" opacity="0.76"/>
<path d="M309.6 196.2l-5.4 3.7" stroke="#b82a42" stroke-width="1.1" opacity="0.47"/>
<path d="M433.0 174.9l6.0 1.7" stroke="#d8607a" stroke-width="1.4" opacity="0.62"/>
<path d="M371.3 202.5l-0.3 5.6" stroke="#eeb0bc" stroke-width="1.1" opacity="0.37"/>
<path d="M439.9 154.8l2.9 0.3" stroke="#961830" stroke-width="0.9" opacity="0.76"/>
<path d="M351.0 168.4l-1.4 0.4" stroke="#c0324c" stroke-width="1.3" opacity="0.78"/>
<path d="M423.6 193.2l4.4 0.8" stroke="#d04860" stroke-width="0.9" opacity="0.60"/>
<path d="M407.1 129.9l5.6 -2.0" stroke="#650d1c" stroke-width="1.3" opacity="0.56"/>
<path d="M294.5 138.0l-4.0 -0.6" stroke="#d04860" stroke-width="1.0" opacity="0.40"/>
<path d="M385.5 119.6l0.7 -3.1" stroke="#8a1529" stroke-width="1.3" opacity="0.41"/>
<path d="M419.7 179.6l2.8 1.3" stroke="#d04860" stroke-width="1.2" opacity="0.79"/>
<path d="M286.6 164.9l-5.2 -0.6" stroke="#961830" stroke-width="1.5" opacity="0.39"/>
<path d="M377.7 190.5l2.1 4.1" stroke="#650d1c" stroke-width="0.9" opacity="0.38"/>
<path d="M357.9 152.2l-1.0 -2.0" stroke="#650d1c" stroke-width="0.9" opacity="0.71"/>
<path d="M367.7 166.4l2.0 0.5" stroke="#650d1c" stroke-width="1.1" opacity="0.63"/>
<path d="M407.0 168.3l2.5 0.4" stroke="#961830" stroke-width="1.2" opacity="0.80"/>
<path d="M339.2 151.8l-1.4 -1.9" stroke="#d8607a" stroke-width="1.3" opacity="0.73"/>
<path d="M310.7 199.8l-3.6 2.5" stroke="#70101f" stroke-width="1.5" opacity="0.49"/>
<path d="M306.6 134.8l-3.9 -5.1" stroke="#5e0c1a" stroke-width="1.5" opacity="0.72"/>
<path d="M421.6 133.0l5.4 -0.5" stroke="#70101f" stroke-width="0.9" opacity="0.62"/>
<path d="M306.4 132.8l-2.3 -2.5" stroke="#7c1225" stroke-width="1.2" opacity="0.48"/>
<path d="M303.5 136.2l-2.8 -2.8" stroke="#8a1529" stroke-width="1.1" opacity="0.64"/>
<path d="M316.5 197.8l-3.9 3.6" stroke="#8a1529" stroke-width="1.0" opacity="0.41"/>
<path d="M295.9 163.4l-3.8 1.4" stroke="#7a1224" stroke-width="1.0" opacity="0.42"/>
<path d="M298.3 181.2l-4.8 0.1" stroke="#d8607a" stroke-width="1.1" opacity="0.51"/>
<path d="M374.9 198.9l3.2 5.1" stroke="#8a1529" stroke-width="1.6" opacity="0.75"/>
<path d="M405.7 131.2l2.8 -2.7" stroke="#b82a42" stroke-width="1.6" opacity="0.78"/>
<path d="M303.1 138.1l-6.0 -0.3" stroke="#bc2c44" stroke-width="1.0" opacity="0.46"/>
<path d="M387.7 135.3l2.8 -3.9" stroke="#bc2c44" stroke-width="1.2" opacity="0.45"/>
<path d="M372.7 169.8l1.9 1.1" stroke="#5e0c1a" stroke-width="1.6" opacity="0.77"/>
<path d="M293.7 150.2l-2.7 -1.5" stroke="#b82a42" stroke-width="1.4" opacity="0.68"/>
<path d="M341.4 188.2l-1.5 2.4" stroke="#d8607a" stroke-width="1.1" opacity="0.65"/>
<path d="M366.0 132.1l1.0 -2.3" stroke="#5e0c1a" stroke-width="1.0" opacity="0.63"/>
<path d="M316.5 200.0l-5.0 2.4" stroke="#eeb0bc" stroke-width="1.7" opacity="0.40"/>
<path d="M375.0 201.5l3.1 3.3" stroke="#d04860" stroke-width="1.5" opacity="0.56"/>
<path d="M296.1 183.5l-3.5 0.4" stroke="#d8607a" stroke-width="1.5" opacity="0.75"/>
<path d="M313.6 190.0l-5.0 0.7" stroke="#650d1c" stroke-width="1.2" opacity="0.65"/>
<path d="M438.9 158.0l4.4 1.4" stroke="#7a1224" stroke-width="0.9" opacity="0.64"/>
<path d="M358.0 210.1l0.8 3.7" stroke="#eeb0bc" stroke-width="1.0" opacity="0.44"/>
<path d="M325.6 128.2l-1.9 -3.0" stroke="#70101f" stroke-width="1.3" opacity="0.77"/>
<path d="M369.3 131.0l0.1 -6.4" stroke="#d8607a" stroke-width="1.5" opacity="0.69"/>
<path d="M358.4 118.5l1.1 -5.6" stroke="#8a1529" stroke-width="1.4" opacity="0.48"/>
<path d="M295.7 194.5l-3.3 0.6" stroke="#70101f" stroke-width="1.1" opacity="0.69"/>
<path d="M381.1 181.0l3.9 3.0" stroke="#70101f" stroke-width="0.9" opacity="0.36"/>
<path d="M396.5 201.1l4.0 5.2" stroke="#8a1529" stroke-width="1.6" opacity="0.39"/>
<path d="M391.2 167.7l2.7 0.8" stroke="#70101f" stroke-width="0.8" opacity="0.57"/>
<path d="M313.9 204.2l-2.4 4.7" stroke="#bc2c44" stroke-width="1.0" opacity="0.35"/>
<path d="M334.5 202.0l-4.4 4.5" stroke="#b82a42" stroke-width="1.4" opacity="0.60"/>
<path d="M344.2 176.7l-2.3 3.4" stroke="#650d1c" stroke-width="0.9" opacity="0.38"/>
<path d="M406.7 127.8l2.8 -3.4" stroke="#b82a42" stroke-width="1.2" opacity="0.42"/>
<path d="M276.6 181.3l-2.9 0.9" stroke="#650d1c" stroke-width="1.4" opacity="0.48"/>
<path d="M304.7 133.4l-3.6 -0.8" stroke="#5e0c1a" stroke-width="1.3" opacity="0.69"/>
<path d="M357.5 151.1l-0.1 -3.7" stroke="#7a1224" stroke-width="1.1" opacity="0.69"/>
<path d="M327.5 193.1l-3.2 5.3" stroke="#eeb0bc" stroke-width="1.6" opacity="0.39"/>
<path d="M350.9 177.2l-1.1 1.8" stroke="#d8607a" stroke-width="1.4" opacity="0.56"/>
<path d="M348.4 165.6l-1.8 0.1" stroke="#961830" stroke-width="1.1" opacity="0.64"/>
<path d="M380.4 169.5l3.1 0.9" stroke="#8a1529" stroke-width="1.0" opacity="0.74"/>
<path d="M413.3 159.0l2.6 -0.1" stroke="#961830" stroke-width="1.0" opacity="0.44"/>
<path d="M386.2 195.4l1.8 3.3" stroke="#7a1224" stroke-width="1.4" opacity="0.37"/>
<path d="M320.5 202.6l-5.3 4.6" stroke="#70101f" stroke-width="1.6" opacity="0.79"/>
<path d="M293.0 163.2l-6.0 -0.7" stroke="#7a1224" stroke-width="1.5" opacity="0.63"/>
<path d="M275.1 161.1l-6.2 1.9" stroke="#5e0c1a" stroke-width="1.5" opacity="0.73"/>
<path d="M427.6 164.9l4.4 0.1" stroke="#b82a42" stroke-width="1.3" opacity="0.60"/>
<path d="M332.4 191.2l-2.2 2.4" stroke="#c0324c" stroke-width="1.1" opacity="0.75"/>
<path d="M379.9 136.9l1.1 -2.1" stroke="#650d1c" stroke-width="1.7" opacity="0.56"/>
<path d="M349.2 163.1l-1.8 -0.2" stroke="#961830" stroke-width="1.0" opacity="0.42"/>
<path d="M397.3 182.0l3.5 1.8" stroke="#650d1c" stroke-width="1.1" opacity="0.53"/>
<path d="M321.2 129.0l-3.0 -2.8" stroke="#8a1529" stroke-width="1.7" opacity="0.79"/>
<path d="M338.7 187.8l-0.8 2.2" stroke="#961830" stroke-width="1.3" opacity="0.43"/>
<path d="M280.6 152.2l-3.9 0.7" stroke="#b82a42" stroke-width="1.5" opacity="0.37"/>
<path d="M357.4 154.1l-0.9 -3.1" stroke="#bc2c44" stroke-width="0.8" opacity="0.43"/>
<path d="M332.5 178.2l-4.2 1.1" stroke="#7a1224" stroke-width="1.6" opacity="0.51"/>
<path d="M319.1 182.8l-3.6 2.2" stroke="#d8607a" stroke-width="0.8" opacity="0.55"/>
<path d="M281.4 160.2l-4.6 1.1" stroke="#8a1529" stroke-width="1.0" opacity="0.37"/>
<path d="M332.2 205.3l-0.9 4.5" stroke="#7c1225" stroke-width="1.3" opacity="0.70"/>
<path d="M427.4 140.1l4.7 -0.2" stroke="#7c1225" stroke-width="1.2" opacity="0.79"/>
<path d="M348.1 130.9l-0.6 -2.9" stroke="#bc2c44" stroke-width="0.9" opacity="0.46"/>
<path d="M322.8 184.5l-1.8 2.3" stroke="#7c1225" stroke-width="1.6" opacity="0.41"/>
<path d="M292.9 166.4l-5.4 0.4" stroke="#8a1529" stroke-width="1.5" opacity="0.45"/>
<path d="M395.3 155.1l4.1 -2.4" stroke="#961830" stroke-width="1.6" opacity="0.42"/>
<path d="M423.3 159.3l5.1 -1.4" stroke="#b82a42" stroke-width="0.9" opacity="0.72"/>
<path d="M399.7 195.8l3.8 2.0" stroke="#eeb0bc" stroke-width="1.7" opacity="0.36"/>
<path d="M289.9 174.2l-6.4 2.0" stroke="#70101f" stroke-width="1.0" opacity="0.40"/>
<path d="M430.7 176.0l4.9 2.9" stroke="#5e0c1a" stroke-width="1.3" opacity="0.58"/>
<path d="M423.3 163.9l5.1 -1.4" stroke="#5e0c1a" stroke-width="1.4" opacity="0.53"/>
<path d="M427.0 137.3l4.3 -2.2" stroke="#c0324c" stroke-width="1.6" opacity="0.52"/>
<path d="M347.7 207.6l-1.3 4.1" stroke="#b82a42" stroke-width="1.6" opacity="0.56"/>
<path d="M420.9 183.5l4.4 -0.2" stroke="#650d1c" stroke-width="1.6" opacity="0.66"/>
<path d="M374.8 150.9l1.6 -2.3" stroke="#eeb0bc" stroke-width="1.3" opacity="0.37"/>
<path d="M351.6 128.1l0.8 -6.2" stroke="#eeb0bc" stroke-width="1.1" opacity="0.47"/>
<path d="M302.6 162.0l-3.9 -1.2" stroke="#5e0c1a" stroke-width="1.5" opacity="0.62"/>
<path d="M353.9 179.7l-1.2 2.3" stroke="#b82a42" stroke-width="1.2" opacity="0.45"/>
<path d="M424.2 169.3l2.8 0.7" stroke="#650d1c" stroke-width="0.8" opacity="0.56"/>
<path d="M284.4 179.4l-3.4 0.6" stroke="#961830" stroke-width="1.5" opacity="0.57"/>
<path d="M298.4 144.9l-5.4 -3.9" stroke="#d04860" stroke-width="1.1" opacity="0.78"/>
<path d="M297.6 162.0l-5.2 1.7" stroke="#8a1529" stroke-width="1.2" opacity="0.76"/>
<path d="M339.5 193.8l-0.8 3.6" stroke="#7c1225" stroke-width="0.9" opacity="0.52"/>
<path d="M423.7 148.8l5.8 -2.0" stroke="#c0324c" stroke-width="1.4" opacity="0.64"/>
<path d="M301.4 169.0l-4.8 0.4" stroke="#b82a42" stroke-width="1.6" opacity="0.65"/>
<path d="M381.7 166.9l2.6 0.6" stroke="#650d1c" stroke-width="1.6" opacity="0.55"/>
<path d="M386.0 130.4l1.8 -6.4" stroke="#70101f" stroke-width="1.1" opacity="0.72"/>
<path d="M379.5 200.2l1.6 3.9" stroke="#7c1225" stroke-width="0.9" opacity="0.43"/>
<path d="M289.4 147.1l-5.6 0.8" stroke="#7c1225" stroke-width="1.2" opacity="0.48"/>
<path d="M353.7 194.7l-2.2 3.7" stroke="#d8607a" stroke-width="1.7" opacity="0.51"/>
<path d="M384.7 187.1l2.1 4.1" stroke="#b82a42" stroke-width="0.9" opacity="0.68"/>
<path d="M290.1 148.1l-3.4 -1.1" stroke="#eeb0bc" stroke-width="1.4" opacity="0.78"/>
<path d="M330.3 151.5l-3.7 -1.7" stroke="#eeb0bc" stroke-width="1.1" opacity="0.37"/>
<path d="M332.8 129.4l-4.0 -4.7" stroke="#b82a42" stroke-width="1.2" opacity="0.59"/>
<path d="M432.4 190.5l5.4 1.4" stroke="#eeb0bc" stroke-width="1.0" opacity="0.37"/>
<path d="M331.3 160.0l-4.2 -0.2" stroke="#eeb0bc" stroke-width="1.4" opacity="0.51"/>
<path d="M292.1 165.9l-5.2 -0.1" stroke="#650d1c" stroke-width="1.1" opacity="0.36"/>
<path d="M342.9 134.1l-1.8 -3.0" stroke="#961830" stroke-width="1.5" opacity="0.36"/>
<path d="M400.4 160.5l3.7 0.8" stroke="#8a1529" stroke-width="0.8" opacity="0.49"/>
<path d="M314.0 142.0l-4.1 -2.7" stroke="#b82a42" stroke-width="1.5" opacity="0.37"/>
<path d="M366.2 191.6l0.5 5.5" stroke="#961830" stroke-width="1.6" opacity="0.51"/>
<path d="M340.0 119.0l-4.6 -5.0" stroke="#70101f" stroke-width="1.3" opacity="0.69"/>
<path d="M296.0 146.2l-3.4 -0.5" stroke="#d04860" stroke-width="1.2" opacity="0.48"/>
<path d="M390.6 206.9l1.0 3.4" stroke="#c0324c" stroke-width="1.4" opacity="0.70"/>
<path d="M353.2 136.9l-1.9 -5.2" stroke="#70101f" stroke-width="1.0" opacity="0.70"/>
<path d="M363.4 186.9l-0.4 2.6" stroke="#b82a42" stroke-width="1.4" opacity="0.76"/>
<path d="M414.3 162.1l4.6 -0.0" stroke="#961830" stroke-width="1.0" opacity="0.51"/>
<path d="M378.1 173.9l2.0 1.2" stroke="#8a1529" stroke-width="1.5" opacity="0.39"/>
<path d="M382.9 194.9l1.5 3.6" stroke="#650d1c" stroke-width="1.5" opacity="0.48"/>
<path d="M290.1 174.0l-2.5 1.1" stroke="#c0324c" stroke-width="0.9" opacity="0.68"/>
<path d="M289.9 150.5l-3.2 0.0" stroke="#d8607a" stroke-width="1.2" opacity="0.75"/>
<path d="M355.1 184.3l0.4 3.7" stroke="#7c1225" stroke-width="1.3" opacity="0.55"/>
<path d="M376.7 148.9l2.0 -3.2" stroke="#7a1224" stroke-width="1.6" opacity="0.41"/>
<path d="M381.3 122.1l2.7 -2.5" stroke="#650d1c" stroke-width="0.8" opacity="0.39"/>
<path d="M399.7 181.9l4.9 0.2" stroke="#961830" stroke-width="1.7" opacity="0.66"/>
<path d="M400.1 133.9l2.8 -4.0" stroke="#650d1c" stroke-width="1.2" opacity="0.59"/>
<path d="M410.2 142.8l2.3 -1.5" stroke="#d8607a" stroke-width="1.5" opacity="0.67"/>
<path d="M376.9 207.3l2.4 5.7" stroke="#d04860" stroke-width="1.4" opacity="0.54"/>
<path d="M305.9 182.5l-3.3 1.3" stroke="#bc2c44" stroke-width="1.6" opacity="0.76"/>
<path d="M417.9 149.3l2.5 0.2" stroke="#8a1529" stroke-width="1.0" opacity="0.44"/>
<path d="M293.5 180.5l-3.1 1.5" stroke="#d04860" stroke-width="1.3" opacity="0.55"/>
<path d="M367.6 126.3l2.3 -3.7" stroke="#c0324c" stroke-width="1.6" opacity="0.80"/>
<path d="M382.0 175.8l2.0 1.6" stroke="#d04860" stroke-width="1.1" opacity="0.51"/>
<path d="M422.8 144.5l3.6 -2.3" stroke="#c0324c" stroke-width="1.4" opacity="0.71"/>
<path d="M301.3 149.3l-2.3 -1.7" stroke="#961830" stroke-width="1.3" opacity="0.45"/>
<path d="M435.0 183.7l6.3 2.3" stroke="#961830" stroke-width="1.7" opacity="0.72"/>
<path d="M331.7 201.1l-1.6 3.0" stroke="#5e0c1a" stroke-width="1.2" opacity="0.66"/>
<path d="M296.7 162.3l-3.9 -1.7" stroke="#bc2c44" stroke-width="1.1" opacity="0.63"/>
<path d="M409.2 194.9l5.3 3.7" stroke="#70101f" stroke-width="1.2" opacity="0.65"/>
<path d="M418.4 147.9l5.3 0.5" stroke="#961830" stroke-width="0.9" opacity="0.60"/>
<path d="M282.9 161.4l-3.7 -1.2" stroke="#d04860" stroke-width="1.1" opacity="0.42"/>
<path d="M376.6 126.5l2.2 -2.6" stroke="#c0324c" stroke-width="1.3" opacity="0.56"/>
<path d="M362.1 157.5l1.3 -1.5" stroke="#b82a42" stroke-width="1.2" opacity="0.72"/>
<path d="M423.6 162.0l3.2 -0.7" stroke="#d04860" stroke-width="1.1" opacity="0.44"/>
<path d="M302.2 160.7l-5.7 1.2" stroke="#eeb0bc" stroke-width="1.6" opacity="0.64"/>
<path d="M446.2 159.0l4.6 -1.1" stroke="#b82a42" stroke-width="1.1" opacity="0.46"/>
<path d="M366.7 152.0l1.8 -1.3" stroke="#7a1224" stroke-width="1.0" opacity="0.38"/>
<path d="M412.4 151.8l3.5 -0.3" stroke="#7a1224" stroke-width="1.1" opacity="0.59"/>
<path d="M335.3 134.5l-2.4 -4.2" stroke="#b82a42" stroke-width="1.6" opacity="0.63"/>
<path d="M417.0 175.3l4.5 2.5" stroke="#c0324c" stroke-width="1.1" opacity="0.59"/>
<path d="M316.6 186.5l-3.3 1.7" stroke="#bc2c44" stroke-width="0.8" opacity="0.73"/>
<path d="M437.4 142.8l6.7 -3.4" stroke="#70101f" stroke-width="1.5" opacity="0.63"/>
<path d="M367.9 207.4l0.7 4.8" stroke="#7c1225" stroke-width="1.5" opacity="0.53"/>
<path d="M337.9 161.6l-1.5 -0.8" stroke="#d04860" stroke-width="1.5" opacity="0.54"/>
<path d="M308.9 146.0l-3.2 -0.9" stroke="#7c1225" stroke-width="0.9" opacity="0.49"/>
<path d="M395.6 204.7l2.5 2.4" stroke="#bc2c44" stroke-width="1.4" opacity="0.51"/>
<path d="M420.3 192.7l2.8 0.8" stroke="#7c1225" stroke-width="1.5" opacity="0.80"/>
<path d="M308.9 159.5l-5.2 -0.5" stroke="#7a1224" stroke-width="1.5" opacity="0.66"/>
<path d="M409.6 199.0l4.4 1.2" stroke="#961830" stroke-width="1.5" opacity="0.47"/>
<path d="M430.9 157.0l4.5 -2.1" stroke="#b82a42" stroke-width="0.9" opacity="0.76"/>
<path d="M387.5 155.8l2.9 -0.3" stroke="#961830" stroke-width="1.0" opacity="0.72"/>
<path d="M305.4 150.4l-2.6 0.3" stroke="#5e0c1a" stroke-width="1.2" opacity="0.58"/>
<path d="M392.4 170.5l3.2 0.6" stroke="#650d1c" stroke-width="1.2" opacity="0.55"/>
<path d="M305.4 127.7l-6.9 -1.6" stroke="#650d1c" stroke-width="1.4" opacity="0.67"/>
<path d="M276.5 146.1l-3.5 0.4" stroke="#eeb0bc" stroke-width="1.7" opacity="0.42"/>
<path d="M344.0 133.8l-0.4 -3.1" stroke="#c0324c" stroke-width="1.6" opacity="0.62"/>
<path d="M318.7 165.1l-3.9 -0.1" stroke="#650d1c" stroke-width="1.5" opacity="0.73"/>
<path d="M369.7 206.8l-1.0 7.0" stroke="#eeb0bc" stroke-width="1.5" opacity="0.55"/>
<path d="M311.6 189.7l-5.8 1.0" stroke="#d8607a" stroke-width="1.7" opacity="0.41"/>
<path d="M419.3 195.4l2.1 2.1" stroke="#bc2c44" stroke-width="1.7" opacity="0.61"/>
<path d="M306.4 160.6l-4.4 0.4" stroke="#d04860" stroke-width="1.2" opacity="0.73"/>
<path d="M277.2 174.0l-6.2 3.5" stroke="#bc2c44" stroke-width="1.7" opacity="0.56"/>
<path d="M300.1 194.7l-3.2 0.6" stroke="#5e0c1a" stroke-width="1.4" opacity="0.78"/>
<path d="M358.1 198.9l-2.0 4.8" stroke="#7c1225" stroke-width="0.9" opacity="0.75"/>
<path d="M287.7 153.4l-3.8 -1.9" stroke="#7c1225" stroke-width="1.3" opacity="0.50"/>
<path d="M395.0 193.8l5.3 2.9" stroke="#7c1225" stroke-width="1.5" opacity="0.66"/>
<path d="M371.8 189.1l0.8 3.0" stroke="#eeb0bc" stroke-width="1.0" opacity="0.61"/>
<path d="M308.1 141.7l-3.2 -1.9" stroke="#d8607a" stroke-width="1.6" opacity="0.36"/>
<path d="M389.9 195.5l1.6 2.4" stroke="#d04860" stroke-width="0.8" opacity="0.38"/>
<path d="M353.3 207.5l-0.6 5.4" stroke="#7c1225" stroke-width="1.7" opacity="0.78"/>
<path d="M319.8 196.2l-1.7 2.4" stroke="#d04860" stroke-width="1.1" opacity="0.78"/>
<path d="M414.1 145.6l5.5 -1.9" stroke="#c0324c" stroke-width="1.7" opacity="0.71"/>
<path d="M357.6 200.6l-0.2 4.2" stroke="#5e0c1a" stroke-width="1.2" opacity="0.58"/>
<path d="M313.5 200.7l-3.6 3.2" stroke="#7c1225" stroke-width="0.8" opacity="0.51"/>
<path d="M345.1 185.8l-1.7 3.0" stroke="#b82a42" stroke-width="0.9" opacity="0.63"/>
<path d="M303.2 130.0l-6.8 -2.4" stroke="#eeb0bc" stroke-width="1.5" opacity="0.65"/>
<path d="M354.1 196.4l-1.6 3.8" stroke="#c0324c" stroke-width="1.6" opacity="0.67"/>
<path d="M380.7 199.2l2.6 2.0" stroke="#70101f" stroke-width="1.4" opacity="0.68"/>
<path d="M318.5 175.3l-3.8 2.3" stroke="#5e0c1a" stroke-width="1.0" opacity="0.79"/>
<path d="M398.7 205.6l4.2 3.9" stroke="#70101f" stroke-width="1.2" opacity="0.36"/>
<path d="M338.6 204.5l-2.6 5.2" stroke="#eeb0bc" stroke-width="1.6" opacity="0.74"/>
<path d="M304.5 135.1l-5.0 -4.3" stroke="#70101f" stroke-width="0.8" opacity="0.79"/>
<path d="M416.4 161.9l5.5 0.4" stroke="#7a1224" stroke-width="1.1" opacity="0.49"/>
<path d="M332.3 142.2l-3.4 -4.1" stroke="#b82a42" stroke-width="1.1" opacity="0.39"/>
<path d="M309.1 174.2l-5.1 2.7" stroke="#bc2c44" stroke-width="1.4" opacity="0.71"/>
<path d="M321.4 143.0l-2.6 -1.4" stroke="#d04860" stroke-width="1.7" opacity="0.44"/>
<path d="M293.1 135.3l-4.2 -0.9" stroke="#650d1c" stroke-width="1.4" opacity="0.69"/>
<path d="M380.6 122.7l3.7 -3.6" stroke="#eeb0bc" stroke-width="1.5" opacity="0.69"/>
<path d="M301.5 147.1l-5.4 -2.0" stroke="#8a1529" stroke-width="1.6" opacity="0.56"/>
<path d="M411.0 154.2l3.7 -0.7" stroke="#7c1225" stroke-width="1.5" opacity="0.52"/>
<path d="M302.2 132.7l-4.5 -3.9" stroke="#8a1529" stroke-width="1.5" opacity="0.46"/>
<path d="M420.9 170.7l3.9 1.8" stroke="#70101f" stroke-width="1.6" opacity="0.46"/>
<path d="M316.3 182.1l-4.3 3.2" stroke="#eeb0bc" stroke-width="1.2" opacity="0.73"/>
<path d="M310.5 136.6l-5.0 -2.4" stroke="#5e0c1a" stroke-width="1.5" opacity="0.64"/>
<path d="M360.2 185.0l0.5 4.8" stroke="#8a1529" stroke-width="1.6" opacity="0.54"/>
<path d="M442.6 175.4l6.5 2.4" stroke="#bc2c44" stroke-width="1.6" opacity="0.41"/>
<path d="M312.4 193.6l-3.6 4.3" stroke="#8a1529" stroke-width="0.9" opacity="0.57"/>
<path d="M309.9 129.2l-5.6 -4.1" stroke="#7c1225" stroke-width="1.1" opacity="0.77"/>
<path d="M306.3 183.3l-3.2 0.3" stroke="#961830" stroke-width="1.3" opacity="0.38"/>
<path d="M297.4 141.2l-2.5 -1.5" stroke="#7c1225" stroke-width="1.6" opacity="0.43"/>
<path d="M296.4 157.1l-2.8 0.8" stroke="#b82a42" stroke-width="1.5" opacity="0.56"/>
<path d="M391.9 196.7l2.3 2.7" stroke="#c0324c" stroke-width="1.4" opacity="0.72"/>
<path d="M370.7 186.9l2.0 2.6" stroke="#bc2c44" stroke-width="1.1" opacity="0.53"/>
<path d="M346.4 184.3l-2.6 3.0" stroke="#650d1c" stroke-width="1.3" opacity="0.60"/>
<path d="M410.8 135.8l3.7 -1.4" stroke="#d8607a" stroke-width="0.9" opacity="0.36"/>
<path d="M386.9 130.4l2.8 -2.9" stroke="#8a1529" stroke-width="1.6" opacity="0.36"/>
<path d="M341.0 141.4l-1.2 -3.5" stroke="#7c1225" stroke-width="1.3" opacity="0.41"/>
<path d="M335.1 169.1l-4.2 0.7" stroke="#650d1c" stroke-width="1.5" opacity="0.78"/>
<path d="M421.3 155.4l6.1 -1.0" stroke="#d8607a" stroke-width="1.5" opacity="0.42"/>
<path d="M415.2 137.8l5.4 -1.3" stroke="#c0324c" stroke-width="1.6" opacity="0.73"/>
<path d="M317.9 123.9l-2.6 -2.2" stroke="#70101f" stroke-width="1.7" opacity="0.50"/>
<path d="M412.6 145.1l2.8 -0.9" stroke="#5e0c1a" stroke-width="1.6" opacity="0.40"/>
<path d="M432.3 174.4l6.0 3.1" stroke="#8a1529" stroke-width="1.3" opacity="0.54"/>
<path d="M416.9 145.5l5.5 -2.7" stroke="#5e0c1a" stroke-width="1.1" opacity="0.51"/>
<path d="M339.5 182.7l-4.0 2.6" stroke="#7a1224" stroke-width="0.8" opacity="0.41"/>
<path d="M345.7 190.6l-1.4 5.1" stroke="#7a1224" stroke-width="0.9" opacity="0.42"/>
<path d="M360.8 186.4l0.9 2.0" stroke="#d8607a" stroke-width="1.1" opacity="0.63"/>
<path d="M424.8 133.7l5.0 -1.2" stroke="#d8607a" stroke-width="1.5" opacity="0.42"/>
<path d="M407.3 173.4l4.3 -0.3" stroke="#8a1529" stroke-width="1.5" opacity="0.52"/>
<path d="M411.3 153.9l2.9 -0.4" stroke="#8a1529" stroke-width="0.9" opacity="0.47"/>
<path d="M269.4 166.6l-3.7 -1.1" stroke="#7c1225" stroke-width="1.3" opacity="0.41"/>
<path d="M403.6 172.3l2.4 1.5" stroke="#7a1224" stroke-width="0.8" opacity="0.58"/>
<path d="M362.5 168.9l0.8 2.3" stroke="#d04860" stroke-width="1.4" opacity="0.45"/>
<path d="M381.8 202.3l2.3 4.7" stroke="#d04860" stroke-width="1.2" opacity="0.52"/>
<path d="M338.1 196.9l-1.5 5.4" stroke="#70101f" stroke-width="1.4" opacity="0.48"/>
<path d="M395.6 122.0l1.7 -3.5" stroke="#961830" stroke-width="0.9" opacity="0.46"/>
<path d="M412.7 182.8l2.3 1.3" stroke="#7a1224" stroke-width="1.1" opacity="0.66"/>
<path d="M427.4 148.8l4.6 -0.1" stroke="#c0324c" stroke-width="1.1" opacity="0.59"/>
<path d="M433.1 165.9l3.1 -0.9" stroke="#d04860" stroke-width="1.1" opacity="0.58"/>
<path d="M277.6 175.1l-6.6 3.4" stroke="#b82a42" stroke-width="1.5" opacity="0.66"/>
<path d="M397.2 204.8l2.8 5.4" stroke="#650d1c" stroke-width="1.2" opacity="0.74"/>
<path d="M325.7 188.3l-2.2 2.7" stroke="#650d1c" stroke-width="1.0" opacity="0.67"/>
<path d="M378.1 132.0l1.0 -4.1" stroke="#961830" stroke-width="1.1" opacity="0.45"/>
<path d="M326.6 132.4l-1.8 -2.2" stroke="#eeb0bc" stroke-width="0.8" opacity="0.38"/>
<path d="M345.5 202.9l-2.7 6.2" stroke="#eeb0bc" stroke-width="1.4" opacity="0.79"/>
<path d="M349.1 122.6l-1.8 -6.5" stroke="#961830" stroke-width="0.9" opacity="0.77"/>
<path d="M347.5 150.6l-2.4 -1.2" stroke="#7a1224" stroke-width="0.8" opacity="0.44"/>
<path d="M390.9 201.3l2.1 2.6" stroke="#5e0c1a" stroke-width="1.4" opacity="0.63"/>
<path d="M432.3 170.9l5.0 2.4" stroke="#8a1529" stroke-width="1.6" opacity="0.63"/>
<path d="M400.8 176.1l4.3 -0.1" stroke="#b82a42" stroke-width="1.1" opacity="0.52"/>
<path d="M292.3 136.8l-6.1 -2.9" stroke="#961830" stroke-width="1.3" opacity="0.77"/>
<path d="M422.1 175.0l5.0 1.8" stroke="#7a1224" stroke-width="1.1" opacity="0.77"/>
<path d="M368.7 135.3l0.1 -3.9" stroke="#650d1c" stroke-width="1.2" opacity="0.42"/>
<path d="M428.0 173.3l3.5 1.6" stroke="#c0324c" stroke-width="1.3" opacity="0.72"/>
<path d="M397.5 174.1l4.2 0.5" stroke="#bc2c44" stroke-width="1.7" opacity="0.50"/>
<path d="M396.1 152.9l2.3 -1.4" stroke="#d8607a" stroke-width="1.3" opacity="0.40"/>
<path d="M323.9 163.4l-3.9 1.4" stroke="#d8607a" stroke-width="1.0" opacity="0.41"/>
<path d="M409.7 166.9l4.0 -0.9" stroke="#7c1225" stroke-width="0.9" opacity="0.50"/>
<path d="M362.1 194.8l1.7 4.7" stroke="#d04860" stroke-width="1.6" opacity="0.67"/>
</g>
<g filter="url(#tex)" opacity=".6"><path fill-rule="evenodd" d="M210.5 167.6a148 87 0 1 0 296 0a148 87 0 1 0 -296 0z M290 164a72 35 0 1 0 144 0a72 35 0 1 0 -144 0z" fill="#000"/></g>
</g></svg>
<div class="node" style="left:38.8px;top:480.0px;width:87.2px;height:133.5px"><div class="hd" style="height:12.3px;background:#79461d"><svg width="6" height="4" viewBox="0 0 6 4" style="top:4.8px"><path d="M0.6 0.6 L3 3.2 L5.4 0.6" fill="none" stroke="#e6e6e6" stroke-width="0.9" stroke-linecap="round" stroke-linejoin="round"/></svg><span style="top:3.5px">Noise Texture</span></div><div class="lab" style="right:7px;top:18.5px">Fac</div><div class="lab" style="right:7px;top:32.1px">Color</div><div class="dd" style="left:6.9px;right:6.4px;top:48.5px"><span style="left:4.4px">3D</span><svg width="4.4" height="3" viewBox="0 0 4.4 3"><path d="M0.5 0.5 L2.2 2.3 L3.9 0.5" fill="none" stroke="#e6e6e6" stroke-width="1.1" stroke-linecap="round" stroke-linejoin="round"/></svg></div><div class="lab" style="left:6.8px;top:67.0px">Vector</div><div class="lab" style="left:6.8px;top:80.7px">Scale</div><div class="fld" style="left:6.8px;right:6.4px;top:91.8px"><span style="left:10px">Detail</span><span style="right:8.6px">15.000</span></div><div class="fld" style="left:6.8px;right:6.4px;top:105.7px"><i style="width:73.7%"></i><span style="left:10px">Roughne</span><span style="right:8.6px">0.754</span></div><div class="fld" style="left:6.8px;right:6.4px;top:119.4px"><span style="left:10px">Distortio</span><span style="right:8.6px">1.000</span></div></div>
<div class="node" style="left:181.9px;top:461.3px;width:87.7px;height:44.5px"><div class="hd" style="height:12.4px;background:#1d1d1d"><svg width="6" height="4" viewBox="0 0 6 4" style="top:4.8px"><path d="M0.6 0.6 L3 3.2 L5.4 0.6" fill="none" stroke="#e6e6e6" stroke-width="0.9" stroke-linecap="round" stroke-linejoin="round"/></svg><span style="top:3.5px">Group Input</span></div><div class="lab" style="right:7px;top:19.0px">Geometry</div><div class="lab" style="right:7px;top:32.8px"></div></div>
<div class="node" style="left:306.8px;top:465.0px;width:87.4px;height:59.6px"><div class="hd" style="height:12.0px;background:#1c6b58"><svg width="6" height="4" viewBox="0 0 6 4" style="top:4.6px"><path d="M0.6 0.6 L3 3.2 L5.4 0.6" fill="none" stroke="#e6e6e6" stroke-width="0.9" stroke-linecap="round" stroke-linejoin="round"/></svg><span style="top:3.3px">Subdivide Mesh</span></div><div class="lab" style="right:7px;top:18.7px">Mesh</div><div class="lab" style="left:6.8px;top:34.3px">Mesh</div><div class="fld" style="left:6.8px;right:6.4px;top:45.4px"><span style="left:10px">Level</span><span style="right:8.6px">5</span></div></div>
<div class="node" style="left:307.9px;top:553.7px;width:87.1px;height:81.3px"><div class="hd" style="height:11.9px;background:#3c3c83"><svg width="6" height="4" viewBox="0 0 6 4" style="top:4.5px"><path d="M0.6 0.6 L3 3.2 L5.4 0.6" fill="none" stroke="#e6e6e6" stroke-width="0.9" stroke-linecap="round" stroke-linejoin="round"/></svg><span style="top:3.3px">Multiply</span></div><div class="lab" style="right:7px;top:18.7px">Vector</div><div class="dd" style="left:6.9px;right:6.4px;top:35.9px"><span style="left:4.4px">Multiply</span><svg width="4.4" height="3" viewBox="0 0 4.4 3"><path d="M0.5 0.5 L2.2 2.3 L3.9 0.5" fill="none" stroke="#e6e6e6" stroke-width="1.1" stroke-linecap="round" stroke-linejoin="round"/></svg></div><div class="lab" style="left:6.8px;top:54.7px">Vector</div><div class="lab" style="left:6.8px;top:68.4px">Vector</div></div>
<div class="node" style="left:421.0px;top:463.2px;width:87.8px;height:87.8px"><div class="hd" style="height:12.0px;background:#1c6b58"><svg width="6" height="4" viewBox="0 0 6 4" style="top:4.6px"><path d="M0.6 0.6 L3 3.2 L5.4 0.6" fill="none" stroke="#e6e6e6" stroke-width="0.9" stroke-linecap="round" stroke-linejoin="round"/></svg><span style="top:3.3px">Set Position</span></div><div class="lab" style="right:7px;top:18.6px">Geometry</div><div class="lab" style="left:6.8px;top:34.4px">Geometry</div><div class="lab" style="left:6.8px;top:48.1px">Selection</div><div class="lab" style="left:6.8px;top:62.1px">Position</div><div class="lab" style="left:6.8px;top:75.9px">Offset</div></div>
<div class="node" style="left:538.8px;top:456.0px;width:93.1px;height:122.0px"><div class="hd" style="height:11.8px;background:#1c6b58"><svg width="6" height="4" viewBox="0 0 6 4" style="top:4.5px"><path d="M0.6 0.6 L3 3.2 L5.4 0.6" fill="none" stroke="#e6e6e6" stroke-width="0.9" stroke-linecap="round" stroke-linejoin="round"/></svg><span style="top:3.2px">Subdivision Surface</span></div><div class="lab" style="right:7px;top:18.6px">Mesh</div><div class="dd" style="left:6.9px;right:6.4px;top:34.8px"><span style="left:4.4px">Keep Boundaries</span><svg width="4.4" height="3" viewBox="0 0 4.4 3"><path d="M0.5 0.5 L2.2 2.3 L3.9 0.5" fill="none" stroke="#e6e6e6" stroke-width="1.1" stroke-linecap="round" stroke-linejoin="round"/></svg></div><div class="dd" style="left:6.9px;right:6.4px;top:50.7px"><span style="left:4.4px">All</span><svg width="4.4" height="3" viewBox="0 0 4.4 3"><path d="M0.5 0.5 L2.2 2.3 L3.9 0.5" fill="none" stroke="#e6e6e6" stroke-width="1.1" stroke-linecap="round" stroke-linejoin="round"/></svg></div><div class="lab" style="left:6.8px;top:68.8px">Mesh</div><div class="fld" style="left:6.8px;right:6.4px;top:80.0px"><span style="left:10px">Level</span><span style="right:8.6px">1</span></div><div class="fld" style="left:6.8px;right:6.4px;top:93.8px"><span style="left:10px">Edge Creas</span><span style="right:8.6px">0.000</span></div><div class="fld" style="left:6.8px;right:6.4px;top:107.7px"><span style="left:10px">Vertex Cre</span><span style="right:8.6px">0.000</span></div></div>
<div class="node" style="left:674.7px;top:467.8px;width:87.8px;height:45.0px"><div class="hd" style="height:12.8px;background:#1d1d1d"><svg width="6" height="4" viewBox="0 0 6 4" style="top:5.0px"><path d="M0.6 0.6 L3 3.2 L5.4 0.6" fill="none" stroke="#e6e6e6" stroke-width="0.9" stroke-linecap="round" stroke-linejoin="round"/></svg><span style="top:3.7px">Group Output</span></div><div class="lab" style="left:6.8px;top:19.0px">Geometry</div></div>
<div class="node" style="left:43.2px;top:633.7px;width:87.4px;height:183.3px"><div class="hd" style="height:11.9px;background:#1f6886"><svg width="6" height="4" viewBox="0 0 6 4" style="top:4.5px"><path d="M0.6 0.6 L3 3.2 L5.4 0.6" fill="none" stroke="#e6e6e6" stroke-width="0.9" stroke-linecap="round" stroke-linejoin="round"/></svg><span style="top:3.3px">Random Value</span></div><div class="lab" style="right:7px;top:18.5px">Value</div><div class="dd" style="left:6.9px;right:6.4px;top:35.9px"><span style="left:4.4px">Vector</span><svg width="4.4" height="3" viewBox="0 0 4.4 3"><path d="M0.5 0.5 L2.2 2.3 L3.9 0.5" fill="none" stroke="#e6e6e6" stroke-width="1.1" stroke-linecap="round" stroke-linejoin="round"/></svg></div><div class="lab" style="left:6.8px;top:54.4px">Min:</div><div class="fld" style="left:6.8px;right:6.4px;top:64.5px;border-radius:2.2px 2.2px 0 0"><span style="left:0;right:0;text-align:center">0.000</span></div><div class="fld" style="left:6.8px;right:6.4px;top:76.8px;border-radius:0"><span style="left:0;right:0;text-align:center">0.000</span></div><div class="fld" style="left:6.8px;right:6.4px;top:89.1px;border-radius:0 0 2.2px 2.2px"><span style="left:0;right:0;text-align:center">0.000</span></div><div class="lab" style="left:6.8px;top:106.0px">Max:</div><div class="fld" style="left:6.8px;right:6.4px;top:116.0px;border-radius:2.2px 2.2px 0 0"><span style="left:0;right:0;text-align:center">0.300</span></div><div class="fld" style="left:6.8px;right:6.4px;top:128.3px;border-radius:0"><span style="left:0;right:0;text-align:center">0.100</span></div><div class="fld" style="left:6.8px;right:6.4px;top:140.6px;border-radius:0 0 2.2px 2.2px"><span style="left:0;right:0;text-align:center">0.100</span></div><div class="lab" style="left:6.8px;top:157.9px">ID</div><div class="fld" style="left:6.8px;right:6.4px;top:169.1px"><span style="left:10px">Seed</span><span style="right:8.6px">66</span></div></div>
<svg class="abs" style="left:0;top:0" width="768" height="820"><path d="M122.7 501.4 l3.3 -3.3 l3.3 3.3 l-3.3 3.3 z" fill="#a1a1a1" stroke="#16181a" stroke-width="0.6"/><path d="M122.7 515.0 l3.3 -3.3 l3.3 3.3 l-3.3 3.3 z" fill="#c7c729" stroke="#16181a" stroke-width="0.6"/><path d="M35.2 549.9 l3.3 -3.3 l3.3 3.3 l-3.3 3.3 z" fill="#6363c7" stroke="#16181a" stroke-width="0.6"/><path d="M35.2 563.6 l3.3 -3.3 l3.3 3.3 l-3.3 3.3 z" fill="#a1a1a1" stroke="#16181a" stroke-width="0.6"/><path d="M35.0 577.3 l3.5 -3.5 l3.5 3.5 l-3.5 3.5 z" fill="#a1a1a1" stroke="#16181a" stroke-width="0.6"/><circle cx="38.5" cy="577.3" r="0.85" fill="#15151f" opacity=".8"/><path d="M35.0 591.2 l3.5 -3.5 l3.5 3.5 l-3.5 3.5 z" fill="#a1a1a1" stroke="#16181a" stroke-width="0.6"/><circle cx="38.5" cy="591.2" r="0.85" fill="#15151f" opacity=".8"/><path d="M35.0 604.9 l3.5 -3.5 l3.5 3.5 l-3.5 3.5 z" fill="#a1a1a1" stroke="#16181a" stroke-width="0.6"/><circle cx="38.5" cy="604.9" r="0.85" fill="#15151f" opacity=".8"/><circle cx="269.6" cy="483.2" r="2.9" fill="#00d6a3" stroke="#16181a" stroke-width="0.6"/><circle cx="269.6" cy="497.0" r="2.6" fill="#2a2a2a" stroke="#8a8a8a" stroke-width="0.7"/><circle cx="394.2" cy="486.6" r="2.9" fill="#00d6a3" stroke="#16181a" stroke-width="0.6"/><circle cx="306.5" cy="502.2" r="2.9" fill="#00d6a3" stroke="#16181a" stroke-width="0.6"/><circle cx="306.5" cy="515.9" r="2.9" fill="#598c5c" stroke="#16181a" stroke-width="0.6"/><path d="M391.7 575.3 l3.3 -3.3 l3.3 3.3 l-3.3 3.3 z" fill="#6363c7" stroke="#16181a" stroke-width="0.6"/><path d="M304.3 611.3 l3.3 -3.3 l3.3 3.3 l-3.3 3.3 z" fill="#6363c7" stroke="#16181a" stroke-width="0.6"/><path d="M304.3 625.0 l3.3 -3.3 l3.3 3.3 l-3.3 3.3 z" fill="#6363c7" stroke="#16181a" stroke-width="0.6"/><circle cx="508.8" cy="484.7" r="2.9" fill="#00d6a3" stroke="#16181a" stroke-width="0.6"/><circle cx="420.7" cy="500.5" r="2.9" fill="#00d6a3" stroke="#16181a" stroke-width="0.6"/><path d="M417.2 514.2 l3.5 -3.5 l3.5 3.5 l-3.5 3.5 z" fill="#e2e2e2" stroke="#16181a" stroke-width="0.6"/><circle cx="420.7" cy="514.2" r="0.85" fill="#15151f" opacity=".8"/><path d="M417.4 528.2 l3.3 -3.3 l3.3 3.3 l-3.3 3.3 z" fill="#6363c7" stroke="#16181a" stroke-width="0.6"/><path d="M417.4 542.0 l3.3 -3.3 l3.3 3.3 l-3.3 3.3 z" fill="#6363c7" stroke="#16181a" stroke-width="0.6"/><circle cx="631.9" cy="477.5" r="2.9" fill="#00d6a3" stroke="#16181a" stroke-width="0.6"/><circle cx="538.5" cy="527.7" r="2.9" fill="#00d6a3" stroke="#16181a" stroke-width="0.6"/><circle cx="538.5" cy="541.5" r="2.9" fill="#598c5c" stroke="#16181a" stroke-width="0.6"/><path d="M535.0 555.3 l3.5 -3.5 l3.5 3.5 l-3.5 3.5 z" fill="#a1a1a1" stroke="#16181a" stroke-width="0.6"/><circle cx="538.5" cy="555.3" r="0.85" fill="#15151f" opacity=".8"/><path d="M535.0 569.2 l3.5 -3.5 l3.5 3.5 l-3.5 3.5 z" fill="#a1a1a1" stroke="#16181a" stroke-width="0.6"/><circle cx="538.5" cy="569.2" r="0.85" fill="#15151f" opacity=".8"/><circle cx="674.4" cy="489.7" r="2.9" fill="#00d6a3" stroke="#16181a" stroke-width="0.6"/><circle cx="674.4" cy="503.6" r="2.6" fill="#2a2a2a" stroke="#8a8a8a" stroke-width="0.7"/><path d="M127.3 655.1 l3.3 -3.3 l3.3 3.3 l-3.3 3.3 z" fill="#6363c7" stroke="#16181a" stroke-width="0.6"/><path d="M39.4 691.0 l3.5 -3.5 l3.5 3.5 l-3.5 3.5 z" fill="#6363c7" stroke="#16181a" stroke-width="0.6"/><circle cx="42.9" cy="691.0" r="0.85" fill="#15151f" opacity=".8"/><path d="M39.4 742.6 l3.5 -3.5 l3.5 3.5 l-3.5 3.5 z" fill="#6363c7" stroke="#16181a" stroke-width="0.6"/><circle cx="42.9" cy="742.6" r="0.85" fill="#15151f" opacity=".8"/><path d="M39.6 794.5 l3.3 -3.3 l3.3 3.3 l-3.3 3.3 z" fill="#598c5c" stroke="#16181a" stroke-width="0.6"/><path d="M39.4 808.3 l3.5 -3.5 l3.5 3.5 l-3.5 3.5 z" fill="#598c5c" stroke="#16181a" stroke-width="0.6"/><circle cx="42.9" cy="808.3" r="0.85" fill="#15151f" opacity=".8"/></svg>
<div id="vshadow"></div>
<div id="status">Frame:1 | Time:00:42.37 | Remaining:00:05.59 | Mem:854.31M, Peak:854.31M | Scene, ViewLayer | Sample 112/128</div>
<svg class="abs" style="left:0;top:0" width="768" height="70" viewBox="0 0 768 70">
<g fill="#222222">
<rect x="10.5" y="-3" width="22.7" height="4.4" rx="1.6"/><rect x="39" y="-3" width="50.7" height="4.4" rx="1.6"/>
<rect x="287.5" y="-3" width="116" height="4.2" rx="1.6"/>
<rect x="548" y="-3" width="48" height="4.2" rx="1.6"/><rect x="597" y="-3" width="73" height="4.2" rx="1.6"/><rect x="671" y="-3" width="60.5" height="4.2" rx="1.6"/><rect x="738.5" y="-3" width="20.5" height="4.2" rx="1.6"/>
</g>
<g fill="#565656"><rect x="404" y="-3" width="14.6" height="4" /><rect x="419.4" y="-3" width="14.6" height="4"/><rect x="434.8" y="-3" width="14.6" height="4"/><rect x="450.2" y="-3" width="14" height="4" rx="1.2"/></g>
<g fill="#4772b3"><rect x="479.6" y="-3" width="13.6" height="4.1" rx="1.4"/><rect x="514.4" y="-3" width="12.8" height="4.1" rx="1.4"/></g>
<path d="M4.6 15.2h3.6a2 2 0 0 1 2 2v7a2 2 0 0 1 -2 2h-3.6z" fill="#282828"/>
<path d="M5.2 17.7l2.6 2.5l-2.6 2.5" fill="none" stroke="#c8c8c8" stroke-width="0.9" stroke-linecap="round" stroke-linejoin="round"/>
<path d="M766.4 15.2h-3.6a2 2 0 0 0 -2 2v7a2 2 0 0 0 2 2h3.6z" fill="#282828"/>
<path d="M765.6 18l-2.8 2.4l2.8 2.4" fill="none" stroke="#c8c8c8" stroke-width="0.9" stroke-linecap="round" stroke-linejoin="round"/>
<circle cx="748.8" cy="22" r="10.5" fill="#000" opacity=".3"/>
<circle cx="748.8" cy="45" r="10.5" fill="#000" opacity=".3"/>
<g>
<circle cx="750.1" cy="20.6" r="4.7" fill="#e4e4e4"/>
<path d="M746.6 24.2l-3.1 3.3" stroke="#e4e4e4" stroke-width="1.3" stroke-linecap="round"/>
<path d="M750.1 18.1v5M747.6 20.6h5" stroke="#9a4f5f" stroke-width="0.9"/>
</g>
<g fill="#e4e4e4" stroke="#e4e4e4" stroke-linecap="round" stroke-linejoin="round" transform="translate(0.8 0.3)">
<path d="M746.9 45.5v-4.3M749.3 44.8v-5.6M751.6 45v-4.8M753.6 46v-3.2" stroke-width="1.35" fill="none"/>
<path d="M746.2 45.2l-2.6 -1.6c-0.7 -0.3 -1.2 0.4 -0.7 1l3.2 4.6c0.9 1.2 2 1.9 3.6 1.9c2.600 0 4.100 -1.600 4.300 -4.300l0.200 -1.800l-8 -0.300z" stroke-width="0.5"/>
</g>
</svg>

</div></body></html>
